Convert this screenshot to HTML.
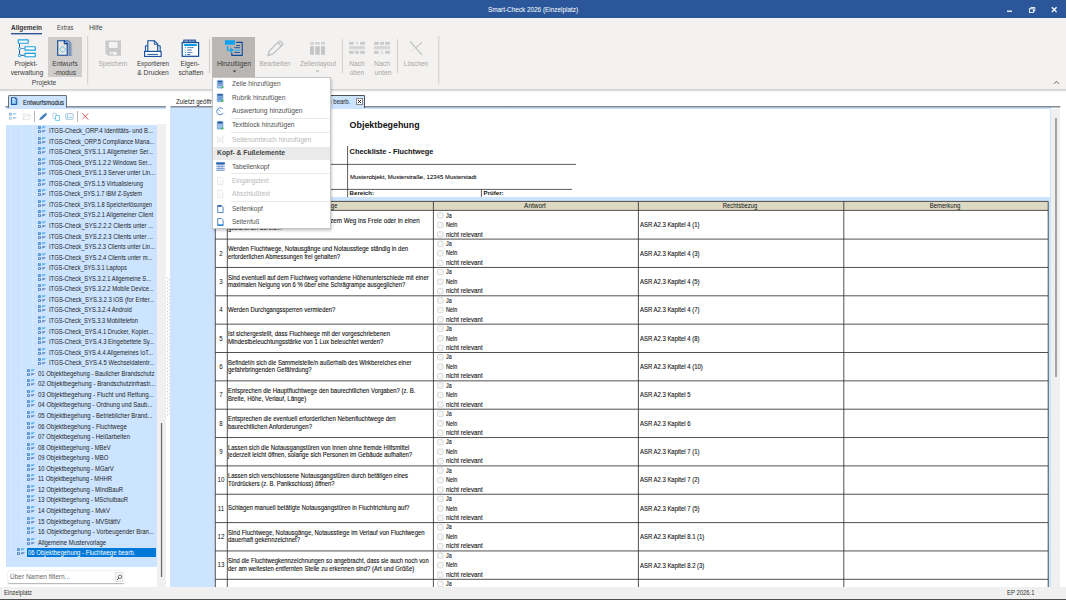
<!DOCTYPE html>
<html><head><meta charset="utf-8"><title>Smart-Check 2026 (Einzelplatz)</title>
<style>
*{box-sizing:border-box;margin:0;padding:0}
html,body{width:1066px;height:600px;overflow:hidden;background:#fff;font-family:"Liberation Sans",sans-serif;color:#222}
div,span,svg{position:absolute}
.t{white-space:nowrap;line-height:1}
.c{transform:translateX(-50%)}
#title{left:0;top:0;width:1066px;height:18px;background:#2b579a}
#ribbon{left:0;top:18px;width:1066px;height:71px;background:#f3f2f1}
#rshadow{left:0;top:89px;width:1066px;height:3px;background:linear-gradient(#cfcdcb,#e6e5e4 60%,#ffffff)}
.rl{font-size:6.67px;color:#3b3a39;text-align:center;white-space:nowrap;line-height:8.4px;transform:translateX(-50%)}
.rl.d{color:#a8a6a4}
.vsep{width:1px;background:#d2d0ce}
.tr{font-size:6px;color:#1e1e1e;white-space:nowrap;line-height:1;left:0}
.mi{font-size:6.67px;color:#444;white-space:nowrap;line-height:1;left:231.7px}
.mi.d{color:#b4b2b0}
.msep{left:230.6px;width:99.6px;height:1px;background:#eae9e8}
.q{font-size:6px;line-height:8px;color:#111;white-space:nowrap;left:228.3px}
.hl{background:#3a3a3a;height:1px}
.vl{background:#3a3a3a;width:1px}
.cb{width:5.9px;height:5.9px;border:0.8px solid #cfcfcf;border-radius:1.4px;background:#f7f7f7;left:437.4px}
.cl{font-size:6.15px;color:#111;left:445.6px;white-space:nowrap;line-height:1}
</style></head><body>
<div id="title"></div>
<div class="t c" style="left:533px;top:6.5px;font-size:6.4px;color:#fff">Smart-Check 2026 (Einzelplatz)</div>
<svg style="left:1000px;top:3px" width="66" height="14" viewBox="0 0 66 14"><g stroke="#fff" fill="none"><path d="M7 8.2h5" stroke-width="1.3"/><rect x="29.4" y="5.8" width="4" height="3.6" stroke-width="0.9"/><path d="M30.8 5.8v-1.3h4v3.6h-1.3" stroke-width="0.9"/><path d="M51.8 4.3l4.8 4.8M56.6 4.3l-4.8 4.8" stroke-width="1.3"/></g></svg>
<div id="ribbon"></div><div id="rshadow"></div>
<div class="t" style="left:11.00px;top:24.50px;font-size:6.9px;color:#333;font-weight:bold;transform:scaleX(0.9412);transform-origin:0 0;">Allgemein</div>
<svg style="left:0;top:30px" width="60" height="6" viewBox="0 30 60 6"><rect x="11" y="33" width="31" height="1.4" fill="#2b579a"/></svg>
<div class="t" style="left:56.90px;top:24.60px;font-size:6.9px;color:#444;transform:scaleX(0.8346);transform-origin:0 0;">Extras</div>
<div class="t" style="left:88.70px;top:24.60px;font-size:6.9px;color:#444;transform:scaleX(0.9785);transform-origin:0 0;">Hilfe</div>
<div style="left:48px;top:37px;width:34px;height:39.6px;background:#cfcdcb"></div>
<div style="left:212.3px;top:37px;width:42.6px;height:39.6px;background:#b9b6b3"></div>
<svg style="left:0;top:30px" width="460" height="60" viewBox="0 30 460 60"><path d="M87.7 36V84.5M209.5 39.2V73M342.4 39.2V73M397.5 39.2V73M438.8 36V84.5" stroke="#cfcdcb" stroke-width="1" fill="none"/></svg>
<div class="t" style="left:26.40px;top:61.20px;font-size:6.67px;color:#3b3a39;transform:translateX(-50%) scaleX(1.0027);">Projekt-</div>
<div class="t" style="left:26.80px;top:69.60px;font-size:6.67px;color:#3b3a39;transform:translateX(-50%) scaleX(1.0123);">verwaltung</div>
<div class="t" style="left:64.80px;top:61.20px;font-size:6.67px;color:#3b3a39;transform:translateX(-50%) scaleX(0.9805);">Entwurfs</div>
<div class="t" style="left:65.15px;top:69.60px;font-size:6.67px;color:#3b3a39;transform:translateX(-50%) scaleX(1.0134);">-modus</div>
<div class="t" style="left:113.25px;top:61.20px;font-size:6.67px;color:#a8a6a4;transform:translateX(-50%) scaleX(0.9638);">Speichern</div>
<div class="t" style="left:153.00px;top:61.20px;font-size:6.67px;color:#3b3a39;transform:translateX(-50%) scaleX(0.9458);">Exportieren</div>
<div class="t" style="left:153.05px;top:69.60px;font-size:6.67px;color:#3b3a39;transform:translateX(-50%) scaleX(1.0136);">&amp; Drucken</div>
<div class="t" style="left:190.40px;top:61.20px;font-size:6.67px;color:#3b3a39;transform:translateX(-50%) scaleX(0.987);">Eigen-</div>
<div class="t" style="left:190.70px;top:69.60px;font-size:6.67px;color:#3b3a39;transform:translateX(-50%) scaleX(0.9932);">schaften</div>
<div class="t" style="left:233.90px;top:61.20px;font-size:6.67px;color:#3b3a39;transform:translateX(-50%) scaleX(1.0152);">Hinzufügen</div>
<div class="t" style="left:275.45px;top:61.20px;font-size:6.67px;color:#a8a6a4;transform:translateX(-50%) scaleX(0.9657);">Bearbeiten</div>
<div class="t" style="left:317.90px;top:61.20px;font-size:6.67px;color:#a8a6a4;transform:translateX(-50%) scaleX(1.0082);">Zeilenlayout</div>
<div class="t" style="left:357.05px;top:61.20px;font-size:6.67px;color:#a8a6a4;transform:translateX(-50%) scaleX(1.0098);">Nach</div>
<div class="t" style="left:356.95px;top:69.60px;font-size:6.67px;color:#a8a6a4;transform:translateX(-50%) scaleX(0.9789);">oben</div>
<div class="t" style="left:381.95px;top:61.20px;font-size:6.67px;color:#a8a6a4;transform:translateX(-50%) scaleX(1.0227);">Nach</div>
<div class="t" style="left:382.55px;top:69.60px;font-size:6.67px;color:#a8a6a4;transform:translateX(-50%) scaleX(1.0257);">unten</div>
<div class="t" style="left:416.35px;top:61.20px;font-size:6.67px;color:#a8a6a4;transform:translateX(-50%) scaleX(0.9654);">Löschen</div>
<div class="t c" style="left:44px;top:80px;font-size:6.67px;color:#444">Projekte</div>
<svg style="left:231.5px;top:69.8px" width="5" height="3" viewBox="0 0 5 3"><path d="M0.6 0.4L2.5 2.4L4.4 0.4z" fill="#444"/></svg>
<svg style="left:315.3px;top:69.8px" width="5" height="3" viewBox="0 0 5 3"><path d="M0.6 0.4L2.5 2.4L4.4 0.4z" fill="#bbb"/></svg>
<svg style="left:1053px;top:80px" width="7" height="5" viewBox="0 0 7 5"><path d="M1 3.8L3.5 1.3L6 3.8" stroke="#555" stroke-width="0.9" fill="none"/></svg>
<div style="left:5.5px;top:107px;width:160.3px;height:2px;background:#cce4ff"></div>
<svg style="left:0;top:100px" width="1066" height="10" viewBox="0 100 1066 10"><defs><linearGradient id="tl" x1="0" x2="0" y1="0" y2="1"><stop offset="0" stop-color="#6a6e74"/><stop offset="1" stop-color="#a4afbf"/></linearGradient></defs><rect x="5.5" y="106.1" width="160.3" height="1.6" fill="url(#tl)"/></svg>
<div style="left:8px;top:95.3px;width:59px;height:12.7px;background:#cce4ff;border:1px solid #6a6f78;border-bottom:none;border-radius:1.5px 1.5px 0 0"></div>
<div class="t" style="left:22.60px;top:100.10px;font-size:6.3px;color:#1e1e1e;transform:scaleX(0.9469);transform-origin:0 0;-webkit-text-stroke:0.1px #1e1e1e;">Entwurfsmodus</div>
<svg style="left:0;top:36px" width="450" height="24" viewBox="0 36 450 24">
<!-- Projektverwaltung -->
<g fill="none">
<path d="M19.5 43.6V55.5" stroke="#123f8c" stroke-width="0.9"/>
<path d="M20.8 48.5H24.4" stroke="#5d82b8" stroke-width="0.9"/>
<path d="M20.8 55.3H24.4" stroke="#123f8c" stroke-width="0.9"/>
<rect x="18.3" y="39.9" width="9.9" height="3.3" rx="0.2" fill="#fff" stroke="#1ba1e2" stroke-width="1.15"/>
<rect x="24.9" y="46.7" width="10.4" height="3.4" rx="0.2" fill="#fff" stroke="#1ba1e2" stroke-width="1.15"/>
<rect x="24.9" y="53.4" width="10.4" height="3.3" rx="0.2" fill="#fff" stroke="#1ba1e2" stroke-width="1.15"/>
<circle cx="19.5" cy="48.6" r="1.1" fill="#fff" stroke="#1ba1e2" stroke-width="0.9"/>
<rect x="18.4" y="54.3" width="2.2" height="2.2" rx="0.4" fill="#fff" stroke="#1ba1e2" stroke-width="0.9"/>
</g>
<!-- Entwurfsmodus -->
<defs><linearGradient id="fd" x1="0" x2="1"><stop offset="0" stop-color="#6d8fbd"/><stop offset="1" stop-color="#6d8fbd" stop-opacity="0.15"/></linearGradient></defs>
<path d="M64 40.3h4.4l4.2 3.7v11.5h-5z" fill="url(#fd)" opacity="0.55"/>
<g fill="none" stroke="#2c5fa8"><path d="M66 40.6h2.2l1 0.9v14" stroke-width="0.9" opacity="0.75"/><path d="M68.6 41h0.9l1 1v13.5" stroke-width="0.8" opacity="0.5"/><path d="M70.4 42l1.2 1.2v12.3" stroke-width="0.8" opacity="0.3"/><path d="M67 55.5h5" stroke-width="0.8" opacity="0.45"/></g>
<path d="M57.7 40.7h7l2.5 2.5v12H57.7z" fill="#e9e6e2" stroke="#0d4a9a" stroke-width="1.1"/>
<path d="M64.2 40.3v3.6h3.5" fill="#0d4a9a" stroke="#0d4a9a" stroke-width="0.9"/>
<path d="M65.1 41.6v1.4h1.4z" fill="#fff"/>
<path d="M62.6 46.2l3.2 3.2-3.2 3.2-3.2-3.2z" fill="none" stroke="#55c1f0" stroke-width="0.9"/>
<!-- Speichern -->
<path d="M105.4 40.4h15.6v15.4h-12.8l-2.8-2.6z" fill="#c9c9c9"/>
<rect x="108.9" y="42" width="8.7" height="6" fill="#f3f2f1"/>
<rect x="109.9" y="51.9" width="6.9" height="3" fill="#f3f2f1"/>
<rect x="111.2" y="53" width="1.6" height="1.9" fill="#c2c2c2"/>
<!-- Exportieren & Drucken -->
<g fill="none" stroke="#0d4a9a">
<path d="M147.8 51V40.7h6.6l3.3 3.3V51" stroke-width="1.1"/>
<path d="M154.3 40.8v3.5h3.3" stroke-width="0.9"/>
<path d="M147.4 45.8h-2v5.2M158 45.8h2.2v5.2" stroke-width="1"/>
<rect x="144.6" y="51.4" width="16.5" height="5" fill="#fff" stroke-width="1.1"/>
<path d="M147.3 54.4h10.7" stroke-width="0.9"/>
</g>
<!-- Eigenschaften -->
<path d="M182.6 42.2l0.9-2.8h12.2l0.9 2.8z" fill="#3d66a3"/>
<path d="M184.5 40.7h3.3v1.1h-3.3zM189.2 40.7h2v1.1h-2zM192.6 40.7h1.8v1.1h-1.8z" fill="#a9bedb"/>
<rect x="182.2" y="42.6" width="16.4" height="13.7" fill="#fff" stroke="#0d4a9a" stroke-width="1.2"/>
<rect x="184" y="44" width="13" height="1.9" rx="0.4" fill="#0b9be3"/>
<g fill="#1ba1e2"><circle cx="185.5" cy="47.6" r="0.55"/><circle cx="185.5" cy="50" r="0.5" opacity="0.6"/><circle cx="185.5" cy="52.4" r="0.55"/><circle cx="185.5" cy="54.4" r="0.6"/></g>
<path d="M187.2 47.6h6.6" stroke="#3d66a3" stroke-width="0.8"/>
<path d="M187.2 50h4.6" stroke="#7f9cc5" stroke-width="1.4"/>
<path d="M187.2 52.4h5.4" stroke="#3d66a3" stroke-width="0.8"/>
<path d="M187.2 54.4h3.2" stroke="#0d3c8c" stroke-width="0.8"/>
<!-- Hinzufuegen -->
<rect x="224.9" y="40.2" width="10.1" height="4.6" rx="0.3" fill="#10a2ef"/>
<path d="M227.5 46v4.2h3.2" fill="none" stroke="#10a2ef" stroke-width="1.3"/>
<path d="M230.3 47.3l3.5 2.9-3.5 2.9z" fill="#10a2ef"/>
<g fill="none" stroke="#0d4a9a">
<path d="M236.2 42.4h6v13h-10.4v-2.6" stroke-width="1.1"/>
<path d="M236.2 45.5h3.8M234.2 47.7h5.8M234.2 52.4h5.8" stroke-width="0.9"/>
</g>
<path d="M234.8 50.1h5.6" stroke="#4db5ef" stroke-width="1.5"/>
<!-- Bearbeiten -->
<g fill="none" stroke="#c2c2c2" stroke-width="1.35" stroke-linejoin="round">
<path d="M267.9 55.5l1.3-4.6 9.7-9.3c0.6-0.6 1.3-0.6 1.9 0l1.6 1.6c0.6 0.6 0.6 1.3 0 1.9l-9.9 9.1z"/>
<path d="M278 42.6l3.4 3.4"/>
</g>
<path d="M267.9 55.5l0.8-2.8 1.9 2z" fill="#c6c6c6"/>
<!-- Zeilenlayout -->
<g fill="#d3d3d3"><rect x="310" y="42" width="4" height="2.7"/><rect x="315.2" y="42" width="4.6" height="2.7"/><rect x="321" y="42" width="4" height="2.7"/></g>
<g fill="#c6c6c6"><rect x="310" y="46.2" width="4" height="8.6"/><rect x="315.2" y="46.2" width="4.6" height="8.6"/><rect x="321" y="46.2" width="4" height="8.6"/></g>
<!-- Nach oben -->
<g fill="#c9c9c9"><rect x="349.1" y="41.9" width="4.6" height="2.8"/><rect x="360.2" y="41.9" width="4.7" height="2.8"/>
<rect x="349.1" y="51" width="4.6" height="2.8"/><rect x="355.1" y="51" width="3.8" height="2.8"/><rect x="360.2" y="51" width="4.7" height="2.8"/></g>
<rect x="349.1" y="46.1" width="15.8" height="2.8" fill="#d4d4d4"/><rect x="349.1" y="48.9" width="15.8" height="1.4" fill="#e6e6e5"/>
<path d="M357 41.2l1.7 1.7h-1v1.8h-1.4v-1.8h-1z" fill="#d6d6d6"/>
<!-- Nach unten -->
<g fill="#c9c9c9"><rect x="374.1" y="41.9" width="4.6" height="2.8"/><rect x="380.1" y="41.9" width="3.8" height="2.8"/><rect x="385.2" y="41.9" width="4.7" height="2.8"/>
<rect x="374.1" y="51" width="4.6" height="2.8"/><rect x="385.2" y="51" width="4.7" height="2.8"/></g>
<rect x="374.1" y="46.1" width="15.8" height="2.8" fill="#d4d4d4"/><rect x="374.1" y="48.9" width="15.8" height="1.4" fill="#e6e6e5"/>
<path d="M382 54.6l1.7-1.7h-1v-1.8h-1.4v1.8h-1z" fill="#d6d6d6"/>
<!-- Loeschen -->
<path d="M410.4 41.8l11.3 12.8" stroke="#c4c4c4" stroke-width="1.3" stroke-linecap="round"/>
<path d="M421.6 42.8l-5.4 4.6" stroke="#c4c4c4" stroke-width="1.2" stroke-linecap="round"/>
<path d="M416.2 47.4l-5 4.3" stroke="#d4d4d4" stroke-width="0.7" stroke-linecap="round"/>
</svg>
<svg style="left:0;top:94px" width="100" height="30" viewBox="0 94 100 30">
<!-- tab icon -->
<defs><linearGradient id="fd2" x1="0" x2="1"><stop offset="0" stop-color="#2d62a8"/><stop offset="1" stop-color="#2d62a8" stop-opacity="0.1"/></linearGradient></defs>
<path d="M15 97.3h1.5l1.8 1.6v5.9h-3.3z" fill="url(#fd2)"/>
<path d="M11.5 97.7h3.2l1.5 1.5v5.2h-4.7z" fill="#eaf3ff" stroke="#1a56a3" stroke-width="1.1"/>
<circle cx="13.7" cy="101.3" r="1.3" fill="none" stroke="#39aef0" stroke-width="0.7"/>
<path d="M12.4 103.4h2.6" stroke="#39aef0" stroke-width="0.6"/>
<!-- toolbar: checklist -->
<rect x="9.4" y="113.1" width="1.9" height="2.1" fill="#a8cdf0" stroke="#86a9d3" stroke-width="0.6"/>
<rect x="9.4" y="117.1" width="1.9" height="2.1" fill="#fff" stroke="#86a9d3" stroke-width="0.6"/>
<path d="M12.9 113.2h3.8l-0.9 1.4h-2.9z" fill="#7ccbf5"/>
<path d="M12.9 117.2h3.8l-0.9 1.4h-2.9z" fill="#9db4d2"/>
<!-- folder (disabled) -->
<path d="M23.2 119.4v-5.7h2.3l0.9 1h3.3v1.2" fill="none" stroke="#dcdcdc" stroke-width="0.7"/>
<path d="M23.2 119.4l1.3-3.5h6.1l-1.2 3.5z" fill="#fff" stroke="#dcdcdc" stroke-width="0.7"/>
<!-- pencil -->
<path d="M39.2 120.1l0.9-2.3 4.6-4.4 1.9 1.9-4.8 4.2z" fill="#3f7cbd"/>
<path d="M40.3 118l1.6 1.7M41.5 116.8l1.7 1.7M42.7 115.6l1.8 1.7" stroke="#6c9bd0" stroke-width="0.4"/>
<path d="M45 113.2l0.5-0.4c0.3-0.2 0.6-0.2 0.9 0.1l0.6 0.7c0.2 0.3 0.2 0.6 0 0.8l-0.5 0.5z" fill="#5b8fca"/>
<!-- copy -->
<rect x="52.9" y="113.3" width="3.6" height="5" rx="0.6" fill="#fff" stroke="#a3b7d2" stroke-width="0.7"/>
<rect x="55.6" y="115.6" width="3.8" height="4.9" fill="#fff" stroke="#5cc8f5" stroke-width="0.8"/>
<!-- layout -->
<rect x="65.6" y="113.6" width="7.6" height="5.8" rx="0.9" fill="#f4f8fd" stroke="#a3b9d6" stroke-width="0.8"/>
<path d="M67.5 114.6v4M68.6 117.4h3.4" stroke="#5cc8f5" stroke-width="0.7" fill="none"/>
<!-- red X -->
<path d="M82.6 113.5l5.4 5.8" stroke="#e05252" stroke-width="1" stroke-linecap="round"/>
<path d="M88 113.9l-5 4.6" stroke="#e46060" stroke-width="0.9" stroke-linecap="round"/>
</svg>

<div class="vsep" style="left:34px;top:111.3px;height:10.7px;background:#b5b5b5"></div>
<div class="vsep" style="left:77.2px;top:111.3px;height:10.7px;background:#b5b5b5"></div>
<div style="left:5.6px;top:124.5px;width:151px;height:442.2px;background:#cce4ff;overflow:hidden" id="tree">
<svg style="left:0;top:0" width="60" height="443" viewBox="0 0 60 443"><path d="M4.9 0V428.1M15.700000000000001 0V417.1M26.4 0V238.10000000000002M26.4 5.90h5.5M26.4 16.46h5.5M26.4 27.01h5.5M26.4 37.56h5.5M26.4 48.12h5.5M26.4 58.68h5.5M26.4 69.23h5.5M26.4 79.78h5.5M26.4 90.34h5.5M26.4 100.90h5.5M26.4 111.45h5.5M26.4 122.00h5.5M26.4 132.56h5.5M26.4 143.12h5.5M26.4 153.67h5.5M26.4 164.23h5.5M26.4 174.78h5.5M26.4 185.34h5.5M26.4 195.89h5.5M26.4 206.44h5.5M26.4 217.00h5.5M26.4 227.56h5.5M26.4 238.11h5.5M15.700000000000001 248.66h5.5M15.700000000000001 259.22h5.5M15.700000000000001 269.77h5.5M15.700000000000001 280.33h5.5M15.700000000000001 290.88h5.5M15.700000000000001 301.44h5.5M15.700000000000001 312.00h5.5M15.700000000000001 322.55h5.5M15.700000000000001 333.11h5.5M15.700000000000001 343.66h5.5M15.700000000000001 354.22h5.5M15.700000000000001 364.77h5.5M15.700000000000001 375.33h5.5M15.700000000000001 385.88h5.5M15.700000000000001 396.43h5.5M15.700000000000001 406.99h5.5M15.700000000000001 417.54h5.5M4.9 428.10h5.5" stroke="#ddeeff" stroke-width="0.7" fill="none"/></svg>
<svg style="left:32.4px;top:1.5px" width="8.4" height="7" viewBox="0 0 8.4 7"><rect x="0.1" y="0.3" width="2.7" height="2.5" fill="#3b79c0"/><rect x="0.8" y="0.9" width="1.5" height="1.1" fill="#7fb0e2"/><rect x="0.1" y="4.3" width="2.7" height="2.5" fill="#3570b8"/><rect x="0.9" y="5" width="1.1" height="1.1" fill="#cfe4fc"/><path d="M4.1 0.3h3.9l-1.6 1.6l-2.3 0.6z" fill="#5bb6f0"/><path d="M4.1 4.3h3.9l-1.6 1.5l-2.3 0.6z" fill="#6688bb"/></svg>
<div class="t" style="left:43.40px;top:3.50px;font-size:6.3px;color:#1e1e1e;transform:scaleX(0.9533);transform-origin:0 0;">ITGS-Check_ORP.4 Identitäts- und B...</div>
<svg style="left:32.4px;top:12.06px" width="8.4" height="7" viewBox="0 0 8.4 7"><rect x="0.1" y="0.3" width="2.7" height="2.5" fill="#3b79c0"/><rect x="0.8" y="0.9" width="1.5" height="1.1" fill="#7fb0e2"/><rect x="0.1" y="4.3" width="2.7" height="2.5" fill="#3570b8"/><rect x="0.9" y="5" width="1.1" height="1.1" fill="#cfe4fc"/><path d="M4.1 0.3h3.9l-1.6 1.6l-2.3 0.6z" fill="#5bb6f0"/><path d="M4.1 4.3h3.9l-1.6 1.5l-2.3 0.6z" fill="#6688bb"/></svg>
<div class="t" style="left:43.40px;top:14.06px;font-size:6.3px;color:#1e1e1e;transform:scaleX(0.9234);transform-origin:0 0;">ITGS-Check_ORP.5 Compliance Mana...</div>
<svg style="left:32.4px;top:22.61px" width="8.4" height="7" viewBox="0 0 8.4 7"><rect x="0.1" y="0.3" width="2.7" height="2.5" fill="#3b79c0"/><rect x="0.8" y="0.9" width="1.5" height="1.1" fill="#7fb0e2"/><rect x="0.1" y="4.3" width="2.7" height="2.5" fill="#3570b8"/><rect x="0.9" y="5" width="1.1" height="1.1" fill="#cfe4fc"/><path d="M4.1 0.3h3.9l-1.6 1.6l-2.3 0.6z" fill="#5bb6f0"/><path d="M4.1 4.3h3.9l-1.6 1.5l-2.3 0.6z" fill="#6688bb"/></svg>
<div class="t" style="left:43.40px;top:24.61px;font-size:6.3px;color:#1e1e1e;transform:scaleX(0.9256);transform-origin:0 0;">ITGS-Check_SYS.1.1 Allgemeiner Ser...</div>
<svg style="left:32.4px;top:33.16px" width="8.4" height="7" viewBox="0 0 8.4 7"><rect x="0.1" y="0.3" width="2.7" height="2.5" fill="#3b79c0"/><rect x="0.8" y="0.9" width="1.5" height="1.1" fill="#7fb0e2"/><rect x="0.1" y="4.3" width="2.7" height="2.5" fill="#3570b8"/><rect x="0.9" y="5" width="1.1" height="1.1" fill="#cfe4fc"/><path d="M4.1 0.3h3.9l-1.6 1.6l-2.3 0.6z" fill="#5bb6f0"/><path d="M4.1 4.3h3.9l-1.6 1.5l-2.3 0.6z" fill="#6688bb"/></svg>
<div class="t" style="left:43.40px;top:35.16px;font-size:6.3px;color:#1e1e1e;transform:scaleX(0.9342);transform-origin:0 0;">ITGS-Check_SYS.1.2.2 Windows Ser...</div>
<svg style="left:32.4px;top:43.72px" width="8.4" height="7" viewBox="0 0 8.4 7"><rect x="0.1" y="0.3" width="2.7" height="2.5" fill="#3b79c0"/><rect x="0.8" y="0.9" width="1.5" height="1.1" fill="#7fb0e2"/><rect x="0.1" y="4.3" width="2.7" height="2.5" fill="#3570b8"/><rect x="0.9" y="5" width="1.1" height="1.1" fill="#cfe4fc"/><path d="M4.1 0.3h3.9l-1.6 1.6l-2.3 0.6z" fill="#5bb6f0"/><path d="M4.1 4.3h3.9l-1.6 1.5l-2.3 0.6z" fill="#6688bb"/></svg>
<div class="t" style="left:43.40px;top:45.72px;font-size:6.3px;color:#1e1e1e;transform:scaleX(0.9377);transform-origin:0 0;">ITGS-Check_SYS.1.3 Server unter Lin...</div>
<svg style="left:32.4px;top:54.28px" width="8.4" height="7" viewBox="0 0 8.4 7"><rect x="0.1" y="0.3" width="2.7" height="2.5" fill="#3b79c0"/><rect x="0.8" y="0.9" width="1.5" height="1.1" fill="#7fb0e2"/><rect x="0.1" y="4.3" width="2.7" height="2.5" fill="#3570b8"/><rect x="0.9" y="5" width="1.1" height="1.1" fill="#cfe4fc"/><path d="M4.1 0.3h3.9l-1.6 1.6l-2.3 0.6z" fill="#5bb6f0"/><path d="M4.1 4.3h3.9l-1.6 1.5l-2.3 0.6z" fill="#6688bb"/></svg>
<div class="t" style="left:43.40px;top:56.28px;font-size:6.3px;color:#1e1e1e;transform:scaleX(0.9146);transform-origin:0 0;">ITGS-Check_SYS.1.5 Virtualisierung</div>
<svg style="left:32.4px;top:64.83px" width="8.4" height="7" viewBox="0 0 8.4 7"><rect x="0.1" y="0.3" width="2.7" height="2.5" fill="#3b79c0"/><rect x="0.8" y="0.9" width="1.5" height="1.1" fill="#7fb0e2"/><rect x="0.1" y="4.3" width="2.7" height="2.5" fill="#3570b8"/><rect x="0.9" y="5" width="1.1" height="1.1" fill="#cfe4fc"/><path d="M4.1 0.3h3.9l-1.6 1.6l-2.3 0.6z" fill="#5bb6f0"/><path d="M4.1 4.3h3.9l-1.6 1.5l-2.3 0.6z" fill="#6688bb"/></svg>
<div class="t" style="left:43.40px;top:66.83px;font-size:6.3px;color:#1e1e1e;transform:scaleX(0.904);transform-origin:0 0;">ITGS-Check_SYS.1.7 IBM Z-System</div>
<svg style="left:32.4px;top:75.38px" width="8.4" height="7" viewBox="0 0 8.4 7"><rect x="0.1" y="0.3" width="2.7" height="2.5" fill="#3b79c0"/><rect x="0.8" y="0.9" width="1.5" height="1.1" fill="#7fb0e2"/><rect x="0.1" y="4.3" width="2.7" height="2.5" fill="#3570b8"/><rect x="0.9" y="5" width="1.1" height="1.1" fill="#cfe4fc"/><path d="M4.1 0.3h3.9l-1.6 1.6l-2.3 0.6z" fill="#5bb6f0"/><path d="M4.1 4.3h3.9l-1.6 1.5l-2.3 0.6z" fill="#6688bb"/></svg>
<div class="t" style="left:43.40px;top:77.38px;font-size:6.3px;color:#1e1e1e;transform:scaleX(0.9082);transform-origin:0 0;">ITGS-Check_SYS.1.8 Speicherlösungen</div>
<svg style="left:32.4px;top:85.94px" width="8.4" height="7" viewBox="0 0 8.4 7"><rect x="0.1" y="0.3" width="2.7" height="2.5" fill="#3b79c0"/><rect x="0.8" y="0.9" width="1.5" height="1.1" fill="#7fb0e2"/><rect x="0.1" y="4.3" width="2.7" height="2.5" fill="#3570b8"/><rect x="0.9" y="5" width="1.1" height="1.1" fill="#cfe4fc"/><path d="M4.1 0.3h3.9l-1.6 1.6l-2.3 0.6z" fill="#5bb6f0"/><path d="M4.1 4.3h3.9l-1.6 1.5l-2.3 0.6z" fill="#6688bb"/></svg>
<div class="t" style="left:43.40px;top:87.94px;font-size:6.3px;color:#1e1e1e;transform:scaleX(0.9143);transform-origin:0 0;">ITGS-Check_SYS.2.1 Allgemeiner Client</div>
<svg style="left:32.4px;top:96.5px" width="8.4" height="7" viewBox="0 0 8.4 7"><rect x="0.1" y="0.3" width="2.7" height="2.5" fill="#3b79c0"/><rect x="0.8" y="0.9" width="1.5" height="1.1" fill="#7fb0e2"/><rect x="0.1" y="4.3" width="2.7" height="2.5" fill="#3570b8"/><rect x="0.9" y="5" width="1.1" height="1.1" fill="#cfe4fc"/><path d="M4.1 0.3h3.9l-1.6 1.6l-2.3 0.6z" fill="#5bb6f0"/><path d="M4.1 4.3h3.9l-1.6 1.5l-2.3 0.6z" fill="#6688bb"/></svg>
<div class="t" style="left:43.40px;top:98.50px;font-size:6.3px;color:#1e1e1e;transform:scaleX(0.9404);transform-origin:0 0;">ITGS-Check_SYS.2.2.2 Clients unter ...</div>
<svg style="left:32.4px;top:107.05px" width="8.4" height="7" viewBox="0 0 8.4 7"><rect x="0.1" y="0.3" width="2.7" height="2.5" fill="#3b79c0"/><rect x="0.8" y="0.9" width="1.5" height="1.1" fill="#7fb0e2"/><rect x="0.1" y="4.3" width="2.7" height="2.5" fill="#3570b8"/><rect x="0.9" y="5" width="1.1" height="1.1" fill="#cfe4fc"/><path d="M4.1 0.3h3.9l-1.6 1.6l-2.3 0.6z" fill="#5bb6f0"/><path d="M4.1 4.3h3.9l-1.6 1.5l-2.3 0.6z" fill="#6688bb"/></svg>
<div class="t" style="left:43.40px;top:109.05px;font-size:6.3px;color:#1e1e1e;transform:scaleX(0.9404);transform-origin:0 0;">ITGS-Check_SYS.2.2.3 Clients unter ...</div>
<svg style="left:32.4px;top:117.6px" width="8.4" height="7" viewBox="0 0 8.4 7"><rect x="0.1" y="0.3" width="2.7" height="2.5" fill="#3b79c0"/><rect x="0.8" y="0.9" width="1.5" height="1.1" fill="#7fb0e2"/><rect x="0.1" y="4.3" width="2.7" height="2.5" fill="#3570b8"/><rect x="0.9" y="5" width="1.1" height="1.1" fill="#cfe4fc"/><path d="M4.1 0.3h3.9l-1.6 1.6l-2.3 0.6z" fill="#5bb6f0"/><path d="M4.1 4.3h3.9l-1.6 1.5l-2.3 0.6z" fill="#6688bb"/></svg>
<div class="t" style="left:43.40px;top:119.60px;font-size:6.3px;color:#1e1e1e;transform:scaleX(0.9319);transform-origin:0 0;">ITGS-Check_SYS.2.3 Clients unter Lin...</div>
<svg style="left:32.4px;top:128.16px" width="8.4" height="7" viewBox="0 0 8.4 7"><rect x="0.1" y="0.3" width="2.7" height="2.5" fill="#3b79c0"/><rect x="0.8" y="0.9" width="1.5" height="1.1" fill="#7fb0e2"/><rect x="0.1" y="4.3" width="2.7" height="2.5" fill="#3570b8"/><rect x="0.9" y="5" width="1.1" height="1.1" fill="#cfe4fc"/><path d="M4.1 0.3h3.9l-1.6 1.6l-2.3 0.6z" fill="#5bb6f0"/><path d="M4.1 4.3h3.9l-1.6 1.5l-2.3 0.6z" fill="#6688bb"/></svg>
<div class="t" style="left:43.40px;top:130.16px;font-size:6.3px;color:#1e1e1e;transform:scaleX(0.9359);transform-origin:0 0;">ITGS-Check_SYS.2.4 Clients unter m...</div>
<svg style="left:32.4px;top:138.72px" width="8.4" height="7" viewBox="0 0 8.4 7"><rect x="0.1" y="0.3" width="2.7" height="2.5" fill="#3b79c0"/><rect x="0.8" y="0.9" width="1.5" height="1.1" fill="#7fb0e2"/><rect x="0.1" y="4.3" width="2.7" height="2.5" fill="#3570b8"/><rect x="0.9" y="5" width="1.1" height="1.1" fill="#cfe4fc"/><path d="M4.1 0.3h3.9l-1.6 1.6l-2.3 0.6z" fill="#5bb6f0"/><path d="M4.1 4.3h3.9l-1.6 1.5l-2.3 0.6z" fill="#6688bb"/></svg>
<div class="t" style="left:43.40px;top:140.72px;font-size:6.3px;color:#1e1e1e;transform:scaleX(0.9104);transform-origin:0 0;">ITGS-Check_SYS.3.1 Laptops</div>
<svg style="left:32.4px;top:149.27px" width="8.4" height="7" viewBox="0 0 8.4 7"><rect x="0.1" y="0.3" width="2.7" height="2.5" fill="#3b79c0"/><rect x="0.8" y="0.9" width="1.5" height="1.1" fill="#7fb0e2"/><rect x="0.1" y="4.3" width="2.7" height="2.5" fill="#3570b8"/><rect x="0.9" y="5" width="1.1" height="1.1" fill="#cfe4fc"/><path d="M4.1 0.3h3.9l-1.6 1.6l-2.3 0.6z" fill="#5bb6f0"/><path d="M4.1 4.3h3.9l-1.6 1.5l-2.3 0.6z" fill="#6688bb"/></svg>
<div class="t" style="left:43.40px;top:151.27px;font-size:6.3px;color:#1e1e1e;transform:scaleX(0.9252);transform-origin:0 0;">ITGS-Check_SYS.3.2.1 Allgemeine S...</div>
<svg style="left:32.4px;top:159.82px" width="8.4" height="7" viewBox="0 0 8.4 7"><rect x="0.1" y="0.3" width="2.7" height="2.5" fill="#3b79c0"/><rect x="0.8" y="0.9" width="1.5" height="1.1" fill="#7fb0e2"/><rect x="0.1" y="4.3" width="2.7" height="2.5" fill="#3570b8"/><rect x="0.9" y="5" width="1.1" height="1.1" fill="#cfe4fc"/><path d="M4.1 0.3h3.9l-1.6 1.6l-2.3 0.6z" fill="#5bb6f0"/><path d="M4.1 4.3h3.9l-1.6 1.5l-2.3 0.6z" fill="#6688bb"/></svg>
<div class="t" style="left:43.40px;top:161.82px;font-size:6.3px;color:#1e1e1e;transform:scaleX(0.9266);transform-origin:0 0;">ITGS-Check_SYS.3.2.2 Mobile Device...</div>
<svg style="left:32.4px;top:170.38px" width="8.4" height="7" viewBox="0 0 8.4 7"><rect x="0.1" y="0.3" width="2.7" height="2.5" fill="#3b79c0"/><rect x="0.8" y="0.9" width="1.5" height="1.1" fill="#7fb0e2"/><rect x="0.1" y="4.3" width="2.7" height="2.5" fill="#3570b8"/><rect x="0.9" y="5" width="1.1" height="1.1" fill="#cfe4fc"/><path d="M4.1 0.3h3.9l-1.6 1.6l-2.3 0.6z" fill="#5bb6f0"/><path d="M4.1 4.3h3.9l-1.6 1.5l-2.3 0.6z" fill="#6688bb"/></svg>
<div class="t" style="left:43.40px;top:172.38px;font-size:6.3px;color:#1e1e1e;transform:scaleX(0.9428);transform-origin:0 0;">ITGS-Check_SYS.3.2.3 iOS (for Enter...</div>
<svg style="left:32.4px;top:180.94px" width="8.4" height="7" viewBox="0 0 8.4 7"><rect x="0.1" y="0.3" width="2.7" height="2.5" fill="#3b79c0"/><rect x="0.8" y="0.9" width="1.5" height="1.1" fill="#7fb0e2"/><rect x="0.1" y="4.3" width="2.7" height="2.5" fill="#3570b8"/><rect x="0.9" y="5" width="1.1" height="1.1" fill="#cfe4fc"/><path d="M4.1 0.3h3.9l-1.6 1.6l-2.3 0.6z" fill="#5bb6f0"/><path d="M4.1 4.3h3.9l-1.6 1.5l-2.3 0.6z" fill="#6688bb"/></svg>
<div class="t" style="left:43.40px;top:182.94px;font-size:6.3px;color:#1e1e1e;transform:scaleX(0.9235);transform-origin:0 0;">ITGS-Check_SYS.3.2.4 Android</div>
<svg style="left:32.4px;top:191.49px" width="8.4" height="7" viewBox="0 0 8.4 7"><rect x="0.1" y="0.3" width="2.7" height="2.5" fill="#3b79c0"/><rect x="0.8" y="0.9" width="1.5" height="1.1" fill="#7fb0e2"/><rect x="0.1" y="4.3" width="2.7" height="2.5" fill="#3570b8"/><rect x="0.9" y="5" width="1.1" height="1.1" fill="#cfe4fc"/><path d="M4.1 0.3h3.9l-1.6 1.6l-2.3 0.6z" fill="#5bb6f0"/><path d="M4.1 4.3h3.9l-1.6 1.5l-2.3 0.6z" fill="#6688bb"/></svg>
<div class="t" style="left:43.40px;top:193.49px;font-size:6.3px;color:#1e1e1e;transform:scaleX(0.918);transform-origin:0 0;">ITGS-Check_SYS.3.3 Mobiltelefon</div>
<svg style="left:32.4px;top:202.04px" width="8.4" height="7" viewBox="0 0 8.4 7"><rect x="0.1" y="0.3" width="2.7" height="2.5" fill="#3b79c0"/><rect x="0.8" y="0.9" width="1.5" height="1.1" fill="#7fb0e2"/><rect x="0.1" y="4.3" width="2.7" height="2.5" fill="#3570b8"/><rect x="0.9" y="5" width="1.1" height="1.1" fill="#cfe4fc"/><path d="M4.1 0.3h3.9l-1.6 1.6l-2.3 0.6z" fill="#5bb6f0"/><path d="M4.1 4.3h3.9l-1.6 1.5l-2.3 0.6z" fill="#6688bb"/></svg>
<div class="t" style="left:43.40px;top:204.04px;font-size:6.3px;color:#1e1e1e;transform:scaleX(0.9344);transform-origin:0 0;">ITGS-Check_SYS.4.1 Drucker, Kopier...</div>
<svg style="left:32.4px;top:212.6px" width="8.4" height="7" viewBox="0 0 8.4 7"><rect x="0.1" y="0.3" width="2.7" height="2.5" fill="#3b79c0"/><rect x="0.8" y="0.9" width="1.5" height="1.1" fill="#7fb0e2"/><rect x="0.1" y="4.3" width="2.7" height="2.5" fill="#3570b8"/><rect x="0.9" y="5" width="1.1" height="1.1" fill="#cfe4fc"/><path d="M4.1 0.3h3.9l-1.6 1.6l-2.3 0.6z" fill="#5bb6f0"/><path d="M4.1 4.3h3.9l-1.6 1.5l-2.3 0.6z" fill="#6688bb"/></svg>
<div class="t" style="left:43.40px;top:214.60px;font-size:6.3px;color:#1e1e1e;transform:scaleX(0.9378);transform-origin:0 0;">ITGS-Check_SYS.4.3 Eingebettete Sy...</div>
<svg style="left:32.4px;top:223.15px" width="8.4" height="7" viewBox="0 0 8.4 7"><rect x="0.1" y="0.3" width="2.7" height="2.5" fill="#3b79c0"/><rect x="0.8" y="0.9" width="1.5" height="1.1" fill="#7fb0e2"/><rect x="0.1" y="4.3" width="2.7" height="2.5" fill="#3570b8"/><rect x="0.9" y="5" width="1.1" height="1.1" fill="#cfe4fc"/><path d="M4.1 0.3h3.9l-1.6 1.6l-2.3 0.6z" fill="#5bb6f0"/><path d="M4.1 4.3h3.9l-1.6 1.5l-2.3 0.6z" fill="#6688bb"/></svg>
<div class="t" style="left:43.40px;top:225.15px;font-size:6.3px;color:#1e1e1e;transform:scaleX(0.9256);transform-origin:0 0;">ITGS-Check_SYS.4.4 Allgemeines IoT...</div>
<svg style="left:32.4px;top:233.71px" width="8.4" height="7" viewBox="0 0 8.4 7"><rect x="0.1" y="0.3" width="2.7" height="2.5" fill="#3b79c0"/><rect x="0.8" y="0.9" width="1.5" height="1.1" fill="#7fb0e2"/><rect x="0.1" y="4.3" width="2.7" height="2.5" fill="#3570b8"/><rect x="0.9" y="5" width="1.1" height="1.1" fill="#cfe4fc"/><path d="M4.1 0.3h3.9l-1.6 1.6l-2.3 0.6z" fill="#5bb6f0"/><path d="M4.1 4.3h3.9l-1.6 1.5l-2.3 0.6z" fill="#6688bb"/></svg>
<div class="t" style="left:43.40px;top:235.71px;font-size:6.3px;color:#1e1e1e;transform:scaleX(0.9437);transform-origin:0 0;">ITGS-Check_SYS.4.5 Wechseldatentr...</div>
<svg style="left:21.7px;top:244.26px" width="8.4" height="7" viewBox="0 0 8.4 7"><rect x="0.1" y="0.3" width="2.7" height="2.5" fill="#3b79c0"/><rect x="0.8" y="0.9" width="1.5" height="1.1" fill="#7fb0e2"/><rect x="0.1" y="4.3" width="2.7" height="2.5" fill="#3570b8"/><rect x="0.9" y="5" width="1.1" height="1.1" fill="#cfe4fc"/><path d="M4.1 0.3h3.9l-1.6 1.6l-2.3 0.6z" fill="#5bb6f0"/><path d="M4.1 4.3h3.9l-1.6 1.5l-2.3 0.6z" fill="#6688bb"/></svg>
<div class="t" style="left:32.40px;top:246.26px;font-size:6.3px;color:#1e1e1e;transform:scaleX(0.9427);transform-origin:0 0;">01 Objektbegehung - Baulicher Brandschutz</div>
<svg style="left:21.7px;top:254.82px" width="8.4" height="7" viewBox="0 0 8.4 7"><rect x="0.1" y="0.3" width="2.7" height="2.5" fill="#3b79c0"/><rect x="0.8" y="0.9" width="1.5" height="1.1" fill="#7fb0e2"/><rect x="0.1" y="4.3" width="2.7" height="2.5" fill="#3570b8"/><rect x="0.9" y="5" width="1.1" height="1.1" fill="#cfe4fc"/><path d="M4.1 0.3h3.9l-1.6 1.6l-2.3 0.6z" fill="#5bb6f0"/><path d="M4.1 4.3h3.9l-1.6 1.5l-2.3 0.6z" fill="#6688bb"/></svg>
<div class="t" style="left:32.40px;top:256.82px;font-size:6.3px;color:#1e1e1e;transform:scaleX(0.9773);transform-origin:0 0;">02 Objektbegehung - Brandschutzinfrastr...</div>
<svg style="left:21.7px;top:265.38px" width="8.4" height="7" viewBox="0 0 8.4 7"><rect x="0.1" y="0.3" width="2.7" height="2.5" fill="#3b79c0"/><rect x="0.8" y="0.9" width="1.5" height="1.1" fill="#7fb0e2"/><rect x="0.1" y="4.3" width="2.7" height="2.5" fill="#3570b8"/><rect x="0.9" y="5" width="1.1" height="1.1" fill="#cfe4fc"/><path d="M4.1 0.3h3.9l-1.6 1.6l-2.3 0.6z" fill="#5bb6f0"/><path d="M4.1 4.3h3.9l-1.6 1.5l-2.3 0.6z" fill="#6688bb"/></svg>
<div class="t" style="left:32.40px;top:267.38px;font-size:6.3px;color:#1e1e1e;transform:scaleX(0.9724);transform-origin:0 0;">03 Objektbegehung - Flucht und Rettung...</div>
<svg style="left:21.7px;top:275.93px" width="8.4" height="7" viewBox="0 0 8.4 7"><rect x="0.1" y="0.3" width="2.7" height="2.5" fill="#3b79c0"/><rect x="0.8" y="0.9" width="1.5" height="1.1" fill="#7fb0e2"/><rect x="0.1" y="4.3" width="2.7" height="2.5" fill="#3570b8"/><rect x="0.9" y="5" width="1.1" height="1.1" fill="#cfe4fc"/><path d="M4.1 0.3h3.9l-1.6 1.6l-2.3 0.6z" fill="#5bb6f0"/><path d="M4.1 4.3h3.9l-1.6 1.5l-2.3 0.6z" fill="#6688bb"/></svg>
<div class="t" style="left:32.40px;top:277.93px;font-size:6.3px;color:#1e1e1e;transform:scaleX(0.9619);transform-origin:0 0;">04 Objektbegehung - Ordnung und Saub...</div>
<svg style="left:21.7px;top:286.49px" width="8.4" height="7" viewBox="0 0 8.4 7"><rect x="0.1" y="0.3" width="2.7" height="2.5" fill="#3b79c0"/><rect x="0.8" y="0.9" width="1.5" height="1.1" fill="#7fb0e2"/><rect x="0.1" y="4.3" width="2.7" height="2.5" fill="#3570b8"/><rect x="0.9" y="5" width="1.1" height="1.1" fill="#cfe4fc"/><path d="M4.1 0.3h3.9l-1.6 1.6l-2.3 0.6z" fill="#5bb6f0"/><path d="M4.1 4.3h3.9l-1.6 1.5l-2.3 0.6z" fill="#6688bb"/></svg>
<div class="t" style="left:32.40px;top:288.49px;font-size:6.3px;color:#1e1e1e;transform:scaleX(0.9592);transform-origin:0 0;">05 Objektbegehung - Betrieblicher Brand...</div>
<svg style="left:21.7px;top:297.04px" width="8.4" height="7" viewBox="0 0 8.4 7"><rect x="0.1" y="0.3" width="2.7" height="2.5" fill="#3b79c0"/><rect x="0.8" y="0.9" width="1.5" height="1.1" fill="#7fb0e2"/><rect x="0.1" y="4.3" width="2.7" height="2.5" fill="#3570b8"/><rect x="0.9" y="5" width="1.1" height="1.1" fill="#cfe4fc"/><path d="M4.1 0.3h3.9l-1.6 1.6l-2.3 0.6z" fill="#5bb6f0"/><path d="M4.1 4.3h3.9l-1.6 1.5l-2.3 0.6z" fill="#6688bb"/></svg>
<div class="t" style="left:32.40px;top:299.04px;font-size:6.3px;color:#1e1e1e;transform:scaleX(0.9567);transform-origin:0 0;">06 Objektbegehung - Fluchtwege</div>
<svg style="left:21.7px;top:307.59px" width="8.4" height="7" viewBox="0 0 8.4 7"><rect x="0.1" y="0.3" width="2.7" height="2.5" fill="#3b79c0"/><rect x="0.8" y="0.9" width="1.5" height="1.1" fill="#7fb0e2"/><rect x="0.1" y="4.3" width="2.7" height="2.5" fill="#3570b8"/><rect x="0.9" y="5" width="1.1" height="1.1" fill="#cfe4fc"/><path d="M4.1 0.3h3.9l-1.6 1.6l-2.3 0.6z" fill="#5bb6f0"/><path d="M4.1 4.3h3.9l-1.6 1.5l-2.3 0.6z" fill="#6688bb"/></svg>
<div class="t" style="left:32.40px;top:309.59px;font-size:6.3px;color:#1e1e1e;transform:scaleX(0.9521);transform-origin:0 0;">07 Objektbegehung - Heißarbeiten</div>
<svg style="left:21.7px;top:318.15px" width="8.4" height="7" viewBox="0 0 8.4 7"><rect x="0.1" y="0.3" width="2.7" height="2.5" fill="#3b79c0"/><rect x="0.8" y="0.9" width="1.5" height="1.1" fill="#7fb0e2"/><rect x="0.1" y="4.3" width="2.7" height="2.5" fill="#3570b8"/><rect x="0.9" y="5" width="1.1" height="1.1" fill="#cfe4fc"/><path d="M4.1 0.3h3.9l-1.6 1.6l-2.3 0.6z" fill="#5bb6f0"/><path d="M4.1 4.3h3.9l-1.6 1.5l-2.3 0.6z" fill="#6688bb"/></svg>
<div class="t" style="left:32.40px;top:320.15px;font-size:6.3px;color:#1e1e1e;transform:scaleX(0.9361);transform-origin:0 0;">08 Objektbegehung - MBeV</div>
<svg style="left:21.7px;top:328.7px" width="8.4" height="7" viewBox="0 0 8.4 7"><rect x="0.1" y="0.3" width="2.7" height="2.5" fill="#3b79c0"/><rect x="0.8" y="0.9" width="1.5" height="1.1" fill="#7fb0e2"/><rect x="0.1" y="4.3" width="2.7" height="2.5" fill="#3570b8"/><rect x="0.9" y="5" width="1.1" height="1.1" fill="#cfe4fc"/><path d="M4.1 0.3h3.9l-1.6 1.6l-2.3 0.6z" fill="#5bb6f0"/><path d="M4.1 4.3h3.9l-1.6 1.5l-2.3 0.6z" fill="#6688bb"/></svg>
<div class="t" style="left:32.40px;top:330.70px;font-size:6.3px;color:#1e1e1e;transform:scaleX(0.9376);transform-origin:0 0;">09 Objektbegehung - MBO</div>
<svg style="left:21.7px;top:339.26px" width="8.4" height="7" viewBox="0 0 8.4 7"><rect x="0.1" y="0.3" width="2.7" height="2.5" fill="#3b79c0"/><rect x="0.8" y="0.9" width="1.5" height="1.1" fill="#7fb0e2"/><rect x="0.1" y="4.3" width="2.7" height="2.5" fill="#3570b8"/><rect x="0.9" y="5" width="1.1" height="1.1" fill="#cfe4fc"/><path d="M4.1 0.3h3.9l-1.6 1.6l-2.3 0.6z" fill="#5bb6f0"/><path d="M4.1 4.3h3.9l-1.6 1.5l-2.3 0.6z" fill="#6688bb"/></svg>
<div class="t" style="left:32.40px;top:341.26px;font-size:6.3px;color:#1e1e1e;transform:scaleX(0.9408);transform-origin:0 0;">10 Objektbegehung - MGarV</div>
<svg style="left:21.7px;top:349.81px" width="8.4" height="7" viewBox="0 0 8.4 7"><rect x="0.1" y="0.3" width="2.7" height="2.5" fill="#3b79c0"/><rect x="0.8" y="0.9" width="1.5" height="1.1" fill="#7fb0e2"/><rect x="0.1" y="4.3" width="2.7" height="2.5" fill="#3570b8"/><rect x="0.9" y="5" width="1.1" height="1.1" fill="#cfe4fc"/><path d="M4.1 0.3h3.9l-1.6 1.6l-2.3 0.6z" fill="#5bb6f0"/><path d="M4.1 4.3h3.9l-1.6 1.5l-2.3 0.6z" fill="#6688bb"/></svg>
<div class="t" style="left:32.40px;top:351.81px;font-size:6.3px;color:#1e1e1e;transform:scaleX(0.9367);transform-origin:0 0;">11 Objektbegehung - MHHR</div>
<svg style="left:21.7px;top:360.37px" width="8.4" height="7" viewBox="0 0 8.4 7"><rect x="0.1" y="0.3" width="2.7" height="2.5" fill="#3b79c0"/><rect x="0.8" y="0.9" width="1.5" height="1.1" fill="#7fb0e2"/><rect x="0.1" y="4.3" width="2.7" height="2.5" fill="#3570b8"/><rect x="0.9" y="5" width="1.1" height="1.1" fill="#cfe4fc"/><path d="M4.1 0.3h3.9l-1.6 1.6l-2.3 0.6z" fill="#5bb6f0"/><path d="M4.1 4.3h3.9l-1.6 1.5l-2.3 0.6z" fill="#6688bb"/></svg>
<div class="t" style="left:32.40px;top:362.37px;font-size:6.3px;color:#1e1e1e;transform:scaleX(0.9421);transform-origin:0 0;">12 Objektbegehung - MIndBauR</div>
<svg style="left:21.7px;top:370.93px" width="8.4" height="7" viewBox="0 0 8.4 7"><rect x="0.1" y="0.3" width="2.7" height="2.5" fill="#3b79c0"/><rect x="0.8" y="0.9" width="1.5" height="1.1" fill="#7fb0e2"/><rect x="0.1" y="4.3" width="2.7" height="2.5" fill="#3570b8"/><rect x="0.9" y="5" width="1.1" height="1.1" fill="#cfe4fc"/><path d="M4.1 0.3h3.9l-1.6 1.6l-2.3 0.6z" fill="#5bb6f0"/><path d="M4.1 4.3h3.9l-1.6 1.5l-2.3 0.6z" fill="#6688bb"/></svg>
<div class="t" style="left:32.40px;top:372.93px;font-size:6.3px;color:#1e1e1e;transform:scaleX(0.9325);transform-origin:0 0;">13 Objektbegehung - MSchulbauR</div>
<svg style="left:21.7px;top:381.48px" width="8.4" height="7" viewBox="0 0 8.4 7"><rect x="0.1" y="0.3" width="2.7" height="2.5" fill="#3b79c0"/><rect x="0.8" y="0.9" width="1.5" height="1.1" fill="#7fb0e2"/><rect x="0.1" y="4.3" width="2.7" height="2.5" fill="#3570b8"/><rect x="0.9" y="5" width="1.1" height="1.1" fill="#cfe4fc"/><path d="M4.1 0.3h3.9l-1.6 1.6l-2.3 0.6z" fill="#5bb6f0"/><path d="M4.1 4.3h3.9l-1.6 1.5l-2.3 0.6z" fill="#6688bb"/></svg>
<div class="t" style="left:32.40px;top:383.48px;font-size:6.3px;color:#1e1e1e;transform:scaleX(0.9435);transform-origin:0 0;">14 Objektbegehung - MvkV</div>
<svg style="left:21.7px;top:392.03px" width="8.4" height="7" viewBox="0 0 8.4 7"><rect x="0.1" y="0.3" width="2.7" height="2.5" fill="#3b79c0"/><rect x="0.8" y="0.9" width="1.5" height="1.1" fill="#7fb0e2"/><rect x="0.1" y="4.3" width="2.7" height="2.5" fill="#3570b8"/><rect x="0.9" y="5" width="1.1" height="1.1" fill="#cfe4fc"/><path d="M4.1 0.3h3.9l-1.6 1.6l-2.3 0.6z" fill="#5bb6f0"/><path d="M4.1 4.3h3.9l-1.6 1.5l-2.3 0.6z" fill="#6688bb"/></svg>
<div class="t" style="left:32.40px;top:394.03px;font-size:6.3px;color:#1e1e1e;transform:scaleX(0.9476);transform-origin:0 0;">15 Objektbegehung - MVStättV</div>
<svg style="left:21.7px;top:402.59px" width="8.4" height="7" viewBox="0 0 8.4 7"><rect x="0.1" y="0.3" width="2.7" height="2.5" fill="#3b79c0"/><rect x="0.8" y="0.9" width="1.5" height="1.1" fill="#7fb0e2"/><rect x="0.1" y="4.3" width="2.7" height="2.5" fill="#3570b8"/><rect x="0.9" y="5" width="1.1" height="1.1" fill="#cfe4fc"/><path d="M4.1 0.3h3.9l-1.6 1.6l-2.3 0.6z" fill="#5bb6f0"/><path d="M4.1 4.3h3.9l-1.6 1.5l-2.3 0.6z" fill="#6688bb"/></svg>
<div class="t" style="left:32.40px;top:404.59px;font-size:6.3px;color:#1e1e1e;transform:scaleX(0.9632);transform-origin:0 0;">16 Objektbegehung - Vorbeugender Bran...</div>
<svg style="left:21.7px;top:413.14px" width="8.4" height="7" viewBox="0 0 8.4 7"><rect x="0.1" y="0.3" width="2.7" height="2.5" fill="#3b79c0"/><rect x="0.8" y="0.9" width="1.5" height="1.1" fill="#7fb0e2"/><rect x="0.1" y="4.3" width="2.7" height="2.5" fill="#3570b8"/><rect x="0.9" y="5" width="1.1" height="1.1" fill="#cfe4fc"/><path d="M4.1 0.3h3.9l-1.6 1.6l-2.3 0.6z" fill="#5bb6f0"/><path d="M4.1 4.3h3.9l-1.6 1.5l-2.3 0.6z" fill="#6688bb"/></svg>
<div class="t" style="left:32.40px;top:415.14px;font-size:6.3px;color:#1e1e1e;transform:scaleX(0.9339);transform-origin:0 0;">Allgemeine Mustervorlage</div>
<div style="left:21.299999999999997px;top:423.10px;width:129.4px;height:9.8px;background:#0078d7"></div>
<svg style="left:11.3px;top:423.7px" width="8.4" height="7" viewBox="0 0 8.4 7"><rect x="0.1" y="0.3" width="2.7" height="2.5" fill="#3b79c0"/><rect x="0.8" y="0.9" width="1.5" height="1.1" fill="#7fb0e2"/><rect x="0.1" y="4.3" width="2.7" height="2.5" fill="#3570b8"/><rect x="0.9" y="5" width="1.1" height="1.1" fill="#cfe4fc"/><path d="M4.1 0.3h3.9l-1.6 1.6l-2.3 0.6z" fill="#5bb6f0"/><path d="M4.1 4.3h3.9l-1.6 1.5l-2.3 0.6z" fill="#6688bb"/></svg>
<div class="t" style="left:22.20px;top:425.70px;font-size:6.3px;color:#fff;transform:scaleX(0.9539);transform-origin:0 0;">06 Objektbegehung - Fluchtwege bearb.</div>
</div>
<div style="left:157px;top:124px;width:8.6px;height:463px;background:#f0f0f0"></div>
<svg style="left:155px;top:420px" width="12" height="160" viewBox="155 420 12 160"><rect x="160.9" y="423" width="1.25" height="154" fill="#6a6a6a"/></svg>
<svg style="left:0;top:270px" width="180" height="150" viewBox="0 270 180 150"><g fill="#b9b9b9"><rect x="167.1" y="277.60" width="0.9" height="0.9"/><rect x="168.8" y="279.27" width="0.9" height="0.9"/><rect x="167.1" y="280.94" width="0.9" height="0.9"/><rect x="168.8" y="282.61" width="0.9" height="0.9"/><rect x="167.1" y="284.28" width="0.9" height="0.9"/><rect x="168.8" y="285.95" width="0.9" height="0.9"/><rect x="167.1" y="287.62" width="0.9" height="0.9"/><rect x="168.8" y="289.29" width="0.9" height="0.9"/><rect x="167.1" y="290.96" width="0.9" height="0.9"/><rect x="168.8" y="292.63" width="0.9" height="0.9"/><rect x="167.1" y="294.30" width="0.9" height="0.9"/><rect x="168.8" y="295.97" width="0.9" height="0.9"/><rect x="167.1" y="297.64" width="0.9" height="0.9"/><rect x="168.8" y="299.31" width="0.9" height="0.9"/><rect x="167.1" y="300.98" width="0.9" height="0.9"/><rect x="168.8" y="302.65" width="0.9" height="0.9"/><rect x="167.1" y="304.32" width="0.9" height="0.9"/><rect x="168.8" y="305.99" width="0.9" height="0.9"/><rect x="167.1" y="307.66" width="0.9" height="0.9"/><rect x="168.8" y="309.33" width="0.9" height="0.9"/><rect x="167.1" y="311.00" width="0.9" height="0.9"/><rect x="168.8" y="312.67" width="0.9" height="0.9"/><rect x="167.1" y="314.34" width="0.9" height="0.9"/><rect x="168.8" y="316.01" width="0.9" height="0.9"/><rect x="167.1" y="317.68" width="0.9" height="0.9"/><rect x="168.8" y="319.35" width="0.9" height="0.9"/><rect x="167.1" y="321.02" width="0.9" height="0.9"/><rect x="168.8" y="322.69" width="0.9" height="0.9"/><rect x="167.1" y="324.36" width="0.9" height="0.9"/><rect x="168.8" y="326.03" width="0.9" height="0.9"/><rect x="167.1" y="327.70" width="0.9" height="0.9"/><rect x="168.8" y="329.37" width="0.9" height="0.9"/><rect x="167.1" y="331.04" width="0.9" height="0.9"/><rect x="168.8" y="332.71" width="0.9" height="0.9"/><rect x="167.1" y="334.38" width="0.9" height="0.9"/><rect x="168.8" y="336.05" width="0.9" height="0.9"/><rect x="167.1" y="337.72" width="0.9" height="0.9"/><rect x="168.8" y="339.39" width="0.9" height="0.9"/><rect x="167.1" y="341.06" width="0.9" height="0.9"/><rect x="168.8" y="342.73" width="0.9" height="0.9"/><rect x="167.1" y="344.40" width="0.9" height="0.9"/><rect x="168.8" y="346.07" width="0.9" height="0.9"/><rect x="167.1" y="347.74" width="0.9" height="0.9"/><rect x="168.8" y="349.41" width="0.9" height="0.9"/><rect x="167.1" y="351.08" width="0.9" height="0.9"/><rect x="168.8" y="352.75" width="0.9" height="0.9"/><rect x="167.1" y="354.42" width="0.9" height="0.9"/><rect x="168.8" y="356.09" width="0.9" height="0.9"/><rect x="167.1" y="357.76" width="0.9" height="0.9"/><rect x="168.8" y="359.43" width="0.9" height="0.9"/><rect x="167.1" y="361.10" width="0.9" height="0.9"/><rect x="168.8" y="362.77" width="0.9" height="0.9"/><rect x="167.1" y="364.44" width="0.9" height="0.9"/><rect x="168.8" y="366.11" width="0.9" height="0.9"/><rect x="167.1" y="367.78" width="0.9" height="0.9"/><rect x="168.8" y="369.45" width="0.9" height="0.9"/><rect x="167.1" y="371.12" width="0.9" height="0.9"/><rect x="168.8" y="372.79" width="0.9" height="0.9"/><rect x="167.1" y="374.46" width="0.9" height="0.9"/><rect x="168.8" y="376.13" width="0.9" height="0.9"/><rect x="167.1" y="377.80" width="0.9" height="0.9"/><rect x="168.8" y="379.47" width="0.9" height="0.9"/><rect x="167.1" y="381.14" width="0.9" height="0.9"/><rect x="168.8" y="382.81" width="0.9" height="0.9"/><rect x="167.1" y="384.48" width="0.9" height="0.9"/><rect x="168.8" y="386.15" width="0.9" height="0.9"/><rect x="167.1" y="387.82" width="0.9" height="0.9"/><rect x="168.8" y="389.49" width="0.9" height="0.9"/><rect x="167.1" y="391.16" width="0.9" height="0.9"/><rect x="168.8" y="392.83" width="0.9" height="0.9"/><rect x="167.1" y="394.50" width="0.9" height="0.9"/><rect x="168.8" y="396.17" width="0.9" height="0.9"/><rect x="167.1" y="397.84" width="0.9" height="0.9"/><rect x="168.8" y="399.51" width="0.9" height="0.9"/><rect x="167.1" y="401.18" width="0.9" height="0.9"/><rect x="168.8" y="402.85" width="0.9" height="0.9"/><rect x="167.1" y="404.52" width="0.9" height="0.9"/><rect x="168.8" y="406.19" width="0.9" height="0.9"/><rect x="167.1" y="407.86" width="0.9" height="0.9"/><rect x="168.8" y="409.53" width="0.9" height="0.9"/><rect x="167.1" y="411.20" width="0.9" height="0.9"/><rect x="168.8" y="412.87" width="0.9" height="0.9"/><rect x="167.1" y="414.54" width="0.9" height="0.9"/></g></svg>
<div style="left:8px;top:571px;width:116px;height:12px;background:#fff;border-radius:1px;box-shadow:0 0.8px 1.2px rgba(0,0,0,0.3),0 0 0.8px rgba(0,0,0,0.12)"></div>
<div class="t" style="left:9.90px;top:573.60px;font-size:6.5px;color:#686868;transform:scaleX(1.0005);transform-origin:0 0;">Über Namen filtern...</div>
<div style="left:115px;top:572px;width:8px;height:10px;background:#f7f7f7;border:1px solid #e2e2e2"></div>
<svg style="left:116px;top:573.5px" width="7" height="7" viewBox="0 0 7 7"><circle cx="4" cy="2.8" r="1.7" fill="none" stroke="#444" stroke-width="0.7"/><path d="M2.8 4.1L0.9 6.1" stroke="#444" stroke-width="0.9"/></svg>
<div style="left:170px;top:107px;width:881px;height:480px;background:#cce4ff"></div>
<svg style="left:0;top:100px" width="1066" height="10" viewBox="0 100 1066 10"><rect x="170.5" y="106.1" width="889.8" height="1.6" fill="url(#tl)"/></svg>
<div class="t" style="left:176.00px;top:99.40px;font-size:6.4px;color:#1e1e1e;transform:scaleX(0.9632);transform-origin:0 0;">Zuletzt geöffnet</div>
<div style="left:232px;top:95.3px;width:132.6px;height:12.7px;background:#cce4ff;border:1px solid #4d5159;border-bottom:none;border-radius:1.5px 1.5px 0 0"></div>
<div class="t" style="left:243.20px;top:99.30px;font-size:6.3px;color:#1e1e1e;transform:scaleX(0.9557);transform-origin:0 0;">06 Objektbegehung - Fluchtwege bearb.</div>
<div style="left:355.6px;top:98px;width:7px;height:7px;background:#fff;border:0.8px solid #8a8a8a"></div>
<svg style="left:355.6px;top:98px" width="7" height="7" viewBox="0 0 7 7"><path d="M1.9 1.9l3.2 3.2M5.1 1.9l-3.2 3.2" stroke="#111" stroke-width="0.9"/></svg>
<div style="left:215.3px;top:109px;width:834.9px;height:88px;background:#fff"></div>
<div class="t" style="left:349.6px;top:120.6px;font-size:8.9px;font-weight:bold;color:#111">Objektbegehung</div>
<div class="t" style="left:349.6px;top:148.1px;font-size:7.36px;font-weight:bold;color:#111">Checkliste - Fluchtwege</div>
<div class="t" style="left:349.60px;top:174.10px;font-size:6px;color:#111;transform:scaleX(1.0027);transform-origin:0 0;-webkit-text-stroke:0.1px #111;">Musterobjekt, Musterstraße, 12345 Musterstadt</div>
<div class="t" style="left:349.6px;top:190.3px;font-size:6.1px;font-weight:bold;color:#111">Bereich:</div>
<div class="t" style="left:483.6px;top:190.3px;font-size:6.1px;font-weight:bold;color:#111">Prüfer:</div>
<svg style="left:0;top:100px" width="1066" height="100" viewBox="0 100 1066 100"><path d="M347.6 146V197M481.4 189.4V197M215.3 164.4H576M215.3 189.4H572" stroke="#333" stroke-width="0.8" fill="none"/></svg>
<div style="left:215.3px;top:201.4px;width:832.9000000000001px;height:385.6px;background:#fff"></div>
<div style="left:215.3px;top:201.4px;width:832.9000000000001px;height:9.0px;background:#ddd9c3"></div>
<div class="t" style="left:330.00px;top:203.40px;font-size:6.3px;color:#111;transform:translateX(-50%) scaleX(0.9117);">Frage</div>
<div class="t" style="left:535.40px;top:203.40px;font-size:6.3px;color:#111;transform:translateX(-50%) scaleX(1.0206);">Antwort</div>
<div class="t" style="left:740.40px;top:203.40px;font-size:6.3px;color:#111;transform:translateX(-50%) scaleX(0.9438);">Rechtsbezug</div>
<div class="t" style="left:944.60px;top:203.40px;font-size:6.3px;color:#111;transform:translateX(-50%) scaleX(0.9502);">Bemerkung</div>
<div style="left:0;top:0;width:1066px;height:587px;overflow:hidden">
<div class="t" style="left:221.20px;top:222.23px;font-size:6.6px;color:#111;transform:translateX(-50%) scaleX(0.9404);">1</div>
<div class="t" style="left:228.30px;top:217.93px;font-size:6.3px;color:#111;transform:scaleX(0.9893);transform-origin:0 0;-webkit-text-stroke:0.1px #111;">Führen Fluchtwege auf möglichst kurzem Weg ins Freie oder in einen</div>
<div class="t" style="left:228.30px;top:225.43px;font-size:6.3px;color:#111;transform:scaleX(0.9244);transform-origin:0 0;-webkit-text-stroke:0.1px #111;">gesicherten Bereich?</div>
<div class="t" style="left:639.70px;top:222.33px;font-size:6.4px;color:#111;transform:scaleX(0.9291);transform-origin:0 0;-webkit-text-stroke:0.1px #111;">ASR A2.3 Kapitel 4 (1)</div>
<div class="t" style="left:445.60px;top:212.60px;font-size:6.3px;color:#111;transform:scaleX(0.8413);transform-origin:0 0;-webkit-text-stroke:0.1px #111;">Ja</div>
<div class="t" style="left:445.60px;top:222.10px;font-size:6.3px;color:#111;transform:scaleX(0.8724);transform-origin:0 0;-webkit-text-stroke:0.1px #111;">Nein</div>
<div class="t" style="left:445.60px;top:231.60px;font-size:6.3px;color:#111;transform:scaleX(0.9799);transform-origin:0 0;-webkit-text-stroke:0.1px #111;">nicht relevant</div>
<div class="t" style="left:221.20px;top:250.58px;font-size:6.6px;color:#111;transform:translateX(-50%) scaleX(0.9404);">2</div>
<div class="t" style="left:228.30px;top:246.28px;font-size:6.3px;color:#111;transform:scaleX(0.955);transform-origin:0 0;-webkit-text-stroke:0.1px #111;">Werden Fluchtwege, Notausgänge und Notausstiege ständig in den</div>
<div class="t" style="left:228.30px;top:253.78px;font-size:6.3px;color:#111;transform:scaleX(0.9327);transform-origin:0 0;-webkit-text-stroke:0.1px #111;">erforderlichen Abmessungen frei gehalten?</div>
<div class="t" style="left:639.70px;top:250.68px;font-size:6.4px;color:#111;transform:scaleX(0.9291);transform-origin:0 0;-webkit-text-stroke:0.1px #111;">ASR A2.3 Kapitel 4 (3)</div>
<div class="t" style="left:445.60px;top:240.95px;font-size:6.3px;color:#111;transform:scaleX(0.8413);transform-origin:0 0;-webkit-text-stroke:0.1px #111;">Ja</div>
<div class="t" style="left:445.60px;top:250.45px;font-size:6.3px;color:#111;transform:scaleX(0.8724);transform-origin:0 0;-webkit-text-stroke:0.1px #111;">Nein</div>
<div class="t" style="left:445.60px;top:259.95px;font-size:6.3px;color:#111;transform:scaleX(0.9799);transform-origin:0 0;-webkit-text-stroke:0.1px #111;">nicht relevant</div>
<div class="t" style="left:221.20px;top:278.93px;font-size:6.6px;color:#111;transform:translateX(-50%) scaleX(0.9404);">3</div>
<div class="t" style="left:228.30px;top:274.62px;font-size:6.3px;color:#111;transform:scaleX(0.9477);transform-origin:0 0;-webkit-text-stroke:0.1px #111;">Sind eventuell auf dem Fluchtweg vorhandene Höhenunterschiede mit einer</div>
<div class="t" style="left:228.30px;top:282.12px;font-size:6.3px;color:#111;transform:scaleX(0.9322);transform-origin:0 0;-webkit-text-stroke:0.1px #111;">maximalen Neigung von 6 % über eine Schrägrampe ausgeglichen?</div>
<div class="t" style="left:639.70px;top:279.02px;font-size:6.4px;color:#111;transform:scaleX(0.9291);transform-origin:0 0;-webkit-text-stroke:0.1px #111;">ASR A2.3 Kapitel 4 (5)</div>
<div class="t" style="left:445.60px;top:269.30px;font-size:6.3px;color:#111;transform:scaleX(0.8413);transform-origin:0 0;-webkit-text-stroke:0.1px #111;">Ja</div>
<div class="t" style="left:445.60px;top:278.80px;font-size:6.3px;color:#111;transform:scaleX(0.8724);transform-origin:0 0;-webkit-text-stroke:0.1px #111;">Nein</div>
<div class="t" style="left:445.60px;top:288.30px;font-size:6.3px;color:#111;transform:scaleX(0.9799);transform-origin:0 0;-webkit-text-stroke:0.1px #111;">nicht relevant</div>
<div class="t" style="left:221.20px;top:307.28px;font-size:6.6px;color:#111;transform:translateX(-50%) scaleX(0.9404);">4</div>
<div class="t" style="left:228.30px;top:306.98px;font-size:6.3px;color:#111;transform:scaleX(0.9451);transform-origin:0 0;-webkit-text-stroke:0.1px #111;">Werden Durchgangssperren vermieden?</div>
<div class="t" style="left:639.70px;top:307.38px;font-size:6.4px;color:#111;transform:scaleX(0.9291);transform-origin:0 0;-webkit-text-stroke:0.1px #111;">ASR A2.3 Kapitel 4 (7)</div>
<div class="t" style="left:445.60px;top:297.65px;font-size:6.3px;color:#111;transform:scaleX(0.8413);transform-origin:0 0;-webkit-text-stroke:0.1px #111;">Ja</div>
<div class="t" style="left:445.60px;top:307.15px;font-size:6.3px;color:#111;transform:scaleX(0.8724);transform-origin:0 0;-webkit-text-stroke:0.1px #111;">Nein</div>
<div class="t" style="left:445.60px;top:316.65px;font-size:6.3px;color:#111;transform:scaleX(0.9799);transform-origin:0 0;-webkit-text-stroke:0.1px #111;">nicht relevant</div>
<div class="t" style="left:221.20px;top:335.62px;font-size:6.6px;color:#111;transform:translateX(-50%) scaleX(0.9404);">5</div>
<div class="t" style="left:228.30px;top:331.32px;font-size:6.3px;color:#111;transform:scaleX(0.9603);transform-origin:0 0;-webkit-text-stroke:0.1px #111;">Ist sichergestellt, dass Fluchtwege mit der vorgeschriebenen</div>
<div class="t" style="left:228.30px;top:338.82px;font-size:6.3px;color:#111;transform:scaleX(0.9567);transform-origin:0 0;-webkit-text-stroke:0.1px #111;">Mindestbeleuchtungsstärke von 1 Lux beleuchtet werden?</div>
<div class="t" style="left:639.70px;top:335.72px;font-size:6.4px;color:#111;transform:scaleX(0.9291);transform-origin:0 0;-webkit-text-stroke:0.1px #111;">ASR A2.3 Kapitel 4 (8)</div>
<div class="t" style="left:445.60px;top:326.00px;font-size:6.3px;color:#111;transform:scaleX(0.8413);transform-origin:0 0;-webkit-text-stroke:0.1px #111;">Ja</div>
<div class="t" style="left:445.60px;top:335.50px;font-size:6.3px;color:#111;transform:scaleX(0.8724);transform-origin:0 0;-webkit-text-stroke:0.1px #111;">Nein</div>
<div class="t" style="left:445.60px;top:345.00px;font-size:6.3px;color:#111;transform:scaleX(0.9799);transform-origin:0 0;-webkit-text-stroke:0.1px #111;">nicht relevant</div>
<div class="t" style="left:221.20px;top:363.98px;font-size:6.6px;color:#111;transform:translateX(-50%) scaleX(0.9404);">6</div>
<div class="t" style="left:228.30px;top:359.68px;font-size:6.3px;color:#111;transform:scaleX(0.9374);transform-origin:0 0;-webkit-text-stroke:0.1px #111;">Befindet/n sich die Sammelstelle/n außerhalb des Wirkbereiches einer</div>
<div class="t" style="left:228.30px;top:367.18px;font-size:6.3px;color:#111;transform:scaleX(0.9523);transform-origin:0 0;-webkit-text-stroke:0.1px #111;">gefahrbringenden Gefährdung?</div>
<div class="t" style="left:639.70px;top:364.07px;font-size:6.4px;color:#111;transform:scaleX(0.9292);transform-origin:0 0;-webkit-text-stroke:0.1px #111;">ASR A2.3 Kapitel 4 (10)</div>
<div class="t" style="left:445.60px;top:354.35px;font-size:6.3px;color:#111;transform:scaleX(0.8413);transform-origin:0 0;-webkit-text-stroke:0.1px #111;">Ja</div>
<div class="t" style="left:445.60px;top:363.85px;font-size:6.3px;color:#111;transform:scaleX(0.8724);transform-origin:0 0;-webkit-text-stroke:0.1px #111;">Nein</div>
<div class="t" style="left:445.60px;top:373.35px;font-size:6.3px;color:#111;transform:scaleX(0.9799);transform-origin:0 0;-webkit-text-stroke:0.1px #111;">nicht relevant</div>
<div class="t" style="left:221.20px;top:392.33px;font-size:6.6px;color:#111;transform:translateX(-50%) scaleX(0.9404);">7</div>
<div class="t" style="left:228.30px;top:388.03px;font-size:6.3px;color:#111;transform:scaleX(0.9479);transform-origin:0 0;-webkit-text-stroke:0.1px #111;">Entsprechen die Hauptfluchtwege den baurechtlichen Vorgaben? (z. B.</div>
<div class="t" style="left:228.30px;top:395.53px;font-size:6.3px;color:#111;transform:scaleX(0.9628);transform-origin:0 0;-webkit-text-stroke:0.1px #111;">Breite, Höhe, Verlauf, Länge)</div>
<div class="t" style="left:639.70px;top:392.43px;font-size:6.4px;color:#111;transform:scaleX(0.9293);transform-origin:0 0;-webkit-text-stroke:0.1px #111;">ASR A2.3 Kapitel 5</div>
<div class="t" style="left:445.60px;top:382.70px;font-size:6.3px;color:#111;transform:scaleX(0.8413);transform-origin:0 0;-webkit-text-stroke:0.1px #111;">Ja</div>
<div class="t" style="left:445.60px;top:392.20px;font-size:6.3px;color:#111;transform:scaleX(0.8724);transform-origin:0 0;-webkit-text-stroke:0.1px #111;">Nein</div>
<div class="t" style="left:445.60px;top:401.70px;font-size:6.3px;color:#111;transform:scaleX(0.9799);transform-origin:0 0;-webkit-text-stroke:0.1px #111;">nicht relevant</div>
<div class="t" style="left:221.20px;top:420.68px;font-size:6.6px;color:#111;transform:translateX(-50%) scaleX(0.9404);">8</div>
<div class="t" style="left:228.30px;top:416.38px;font-size:6.3px;color:#111;transform:scaleX(0.9562);transform-origin:0 0;-webkit-text-stroke:0.1px #111;">Entsprechen die eventuell erforderlichen Nebenfluchtwege den</div>
<div class="t" style="left:228.30px;top:423.88px;font-size:6.3px;color:#111;transform:scaleX(0.9597);transform-origin:0 0;-webkit-text-stroke:0.1px #111;">baurechtlichen Anforderungen?</div>
<div class="t" style="left:639.70px;top:420.78px;font-size:6.4px;color:#111;transform:scaleX(0.9293);transform-origin:0 0;-webkit-text-stroke:0.1px #111;">ASR A2.3 Kapitel 6</div>
<div class="t" style="left:445.60px;top:411.05px;font-size:6.3px;color:#111;transform:scaleX(0.8413);transform-origin:0 0;-webkit-text-stroke:0.1px #111;">Ja</div>
<div class="t" style="left:445.60px;top:420.55px;font-size:6.3px;color:#111;transform:scaleX(0.8724);transform-origin:0 0;-webkit-text-stroke:0.1px #111;">Nein</div>
<div class="t" style="left:445.60px;top:430.05px;font-size:6.3px;color:#111;transform:scaleX(0.9799);transform-origin:0 0;-webkit-text-stroke:0.1px #111;">nicht relevant</div>
<div class="t" style="left:221.20px;top:449.03px;font-size:6.6px;color:#111;transform:translateX(-50%) scaleX(0.9404);">9</div>
<div class="t" style="left:228.30px;top:444.73px;font-size:6.3px;color:#111;transform:scaleX(0.9456);transform-origin:0 0;-webkit-text-stroke:0.1px #111;">Lassen sich die Notausgangstüren von innen ohne fremde Hilfsmittel</div>
<div class="t" style="left:228.30px;top:452.23px;font-size:6.3px;color:#111;transform:scaleX(0.9503);transform-origin:0 0;-webkit-text-stroke:0.1px #111;">jederzeit leicht öffnen, solange sich Personen im Gebäude aufhalten?</div>
<div class="t" style="left:639.70px;top:449.12px;font-size:6.4px;color:#111;transform:scaleX(0.9291);transform-origin:0 0;-webkit-text-stroke:0.1px #111;">ASR A2.3 Kapitel 7 (1)</div>
<div class="t" style="left:445.60px;top:439.40px;font-size:6.3px;color:#111;transform:scaleX(0.8413);transform-origin:0 0;-webkit-text-stroke:0.1px #111;">Ja</div>
<div class="t" style="left:445.60px;top:448.90px;font-size:6.3px;color:#111;transform:scaleX(0.8724);transform-origin:0 0;-webkit-text-stroke:0.1px #111;">Nein</div>
<div class="t" style="left:445.60px;top:458.40px;font-size:6.3px;color:#111;transform:scaleX(0.9799);transform-origin:0 0;-webkit-text-stroke:0.1px #111;">nicht relevant</div>
<div class="t" style="left:221.20px;top:477.38px;font-size:6.6px;color:#111;transform:translateX(-50%) scaleX(0.9383);">10</div>
<div class="t" style="left:228.30px;top:473.07px;font-size:6.3px;color:#111;transform:scaleX(0.9457);transform-origin:0 0;-webkit-text-stroke:0.1px #111;">Lassen sich verschlossene Notausgangstüren durch betätigen eines</div>
<div class="t" style="left:228.30px;top:480.57px;font-size:6.3px;color:#111;transform:scaleX(0.941);transform-origin:0 0;-webkit-text-stroke:0.1px #111;">Türdrückers (z. B. Panikschloss) öffnen?</div>
<div class="t" style="left:639.70px;top:477.47px;font-size:6.4px;color:#111;transform:scaleX(0.9291);transform-origin:0 0;-webkit-text-stroke:0.1px #111;">ASR A2.3 Kapitel 7 (2)</div>
<div class="t" style="left:445.60px;top:467.75px;font-size:6.3px;color:#111;transform:scaleX(0.8413);transform-origin:0 0;-webkit-text-stroke:0.1px #111;">Ja</div>
<div class="t" style="left:445.60px;top:477.25px;font-size:6.3px;color:#111;transform:scaleX(0.8724);transform-origin:0 0;-webkit-text-stroke:0.1px #111;">Nein</div>
<div class="t" style="left:445.60px;top:486.75px;font-size:6.3px;color:#111;transform:scaleX(0.9799);transform-origin:0 0;-webkit-text-stroke:0.1px #111;">nicht relevant</div>
<div class="t" style="left:221.20px;top:505.73px;font-size:6.6px;color:#111;transform:translateX(-50%) scaleX(0.9385);">11</div>
<div class="t" style="left:228.30px;top:505.43px;font-size:6.3px;color:#111;transform:scaleX(0.949);transform-origin:0 0;-webkit-text-stroke:0.1px #111;">Schlagen manuell betätigte Notausgangstüren in Fluchtrichtung auf?</div>
<div class="t" style="left:639.70px;top:505.82px;font-size:6.4px;color:#111;transform:scaleX(0.9291);transform-origin:0 0;-webkit-text-stroke:0.1px #111;">ASR A2.3 Kapitel 7 (5)</div>
<div class="t" style="left:445.60px;top:496.10px;font-size:6.3px;color:#111;transform:scaleX(0.8413);transform-origin:0 0;-webkit-text-stroke:0.1px #111;">Ja</div>
<div class="t" style="left:445.60px;top:505.60px;font-size:6.3px;color:#111;transform:scaleX(0.8724);transform-origin:0 0;-webkit-text-stroke:0.1px #111;">Nein</div>
<div class="t" style="left:445.60px;top:515.10px;font-size:6.3px;color:#111;transform:scaleX(0.9799);transform-origin:0 0;-webkit-text-stroke:0.1px #111;">nicht relevant</div>
<div class="t" style="left:221.20px;top:534.07px;font-size:6.6px;color:#111;transform:translateX(-50%) scaleX(0.9383);">12</div>
<div class="t" style="left:228.30px;top:529.77px;font-size:6.3px;color:#111;transform:scaleX(0.9508);transform-origin:0 0;-webkit-text-stroke:0.1px #111;">Sind Fluchtwege, Notausgänge, Notausstiege im Verlauf von Fluchtwegen</div>
<div class="t" style="left:228.30px;top:537.27px;font-size:6.3px;color:#111;transform:scaleX(0.9476);transform-origin:0 0;-webkit-text-stroke:0.1px #111;">dauerhaft gekennzeichnet?</div>
<div class="t" style="left:639.70px;top:534.17px;font-size:6.4px;color:#111;transform:scaleX(0.929);transform-origin:0 0;-webkit-text-stroke:0.1px #111;">ASR A2.3 Kapitel 8.1 (1)</div>
<div class="t" style="left:445.60px;top:524.45px;font-size:6.3px;color:#111;transform:scaleX(0.8413);transform-origin:0 0;-webkit-text-stroke:0.1px #111;">Ja</div>
<div class="t" style="left:445.60px;top:533.95px;font-size:6.3px;color:#111;transform:scaleX(0.8724);transform-origin:0 0;-webkit-text-stroke:0.1px #111;">Nein</div>
<div class="t" style="left:445.60px;top:543.45px;font-size:6.3px;color:#111;transform:scaleX(0.9799);transform-origin:0 0;-webkit-text-stroke:0.1px #111;">nicht relevant</div>
<div class="t" style="left:221.20px;top:562.42px;font-size:6.6px;color:#111;transform:translateX(-50%) scaleX(0.9383);">13</div>
<div class="t" style="left:228.30px;top:558.12px;font-size:6.3px;color:#111;transform:scaleX(0.9398);transform-origin:0 0;-webkit-text-stroke:0.1px #111;">Sind die Fluchtwegkennzeichnungen so angebracht, dass sie auch noch von</div>
<div class="t" style="left:228.30px;top:565.62px;font-size:6.3px;color:#111;transform:scaleX(0.9573);transform-origin:0 0;-webkit-text-stroke:0.1px #111;">der am weitesten entfernten Stelle zu erkennen sind? (Art und Größe)</div>
<div class="t" style="left:639.70px;top:562.52px;font-size:6.4px;color:#111;transform:scaleX(0.929);transform-origin:0 0;-webkit-text-stroke:0.1px #111;">ASR A2.3 Kapitel 8.2 (3)</div>
<div class="t" style="left:445.60px;top:552.80px;font-size:6.3px;color:#111;transform:scaleX(0.8413);transform-origin:0 0;-webkit-text-stroke:0.1px #111;">Ja</div>
<div class="t" style="left:445.60px;top:562.30px;font-size:6.3px;color:#111;transform:scaleX(0.8724);transform-origin:0 0;-webkit-text-stroke:0.1px #111;">Nein</div>
<div class="t" style="left:445.60px;top:571.80px;font-size:6.3px;color:#111;transform:scaleX(0.9799);transform-origin:0 0;-webkit-text-stroke:0.1px #111;">nicht relevant</div>
<div class="t" style="left:445.60px;top:581.15px;font-size:6.3px;color:#111;transform:scaleX(0.8413);transform-origin:0 0;-webkit-text-stroke:0.1px #111;">Ja</div>
<div class="t" style="left:445.60px;top:590.65px;font-size:6.3px;color:#111;transform:scaleX(0.8724);transform-origin:0 0;-webkit-text-stroke:0.1px #111;">Nein</div>
<div class="t" style="left:445.60px;top:600.15px;font-size:6.3px;color:#111;transform:scaleX(0.9799);transform-origin:0 0;-webkit-text-stroke:0.1px #111;">nicht relevant</div>
</div>
<svg style="left:0;top:0" width="1066" height="587" viewBox="0 0 1066 587"><path d="M215.3 201.4V587M227.3 201.4V587M433.4 201.4V587M638.4 201.4V587M843.8 201.4V587M1048.2 201.4V587M215.3 201.4H1048.2M215.3 210.40H1048.2M215.3 239.10H1048.2M215.3 267.45H1048.2M215.3 295.80H1048.2M215.3 324.15H1048.2M215.3 352.50H1048.2M215.3 380.85H1048.2M215.3 409.20H1048.2M215.3 437.55H1048.2M215.3 465.90H1048.2M215.3 494.25H1048.2M215.3 522.60H1048.2M215.3 550.95H1048.2M215.3 579.30H1048.2" stroke="#333" stroke-width="0.85" fill="none"/><g fill="#f6f6f6" stroke="#cbcbcb" stroke-width="0.7"><rect x="437.6" y="212.70" width="5.5" height="5.5" rx="1.2"/><rect x="437.6" y="222.20" width="5.5" height="5.5" rx="1.2"/><rect x="437.6" y="231.70" width="5.5" height="5.5" rx="1.2"/><rect x="437.6" y="241.05" width="5.5" height="5.5" rx="1.2"/><rect x="437.6" y="250.55" width="5.5" height="5.5" rx="1.2"/><rect x="437.6" y="260.05" width="5.5" height="5.5" rx="1.2"/><rect x="437.6" y="269.40" width="5.5" height="5.5" rx="1.2"/><rect x="437.6" y="278.90" width="5.5" height="5.5" rx="1.2"/><rect x="437.6" y="288.40" width="5.5" height="5.5" rx="1.2"/><rect x="437.6" y="297.75" width="5.5" height="5.5" rx="1.2"/><rect x="437.6" y="307.25" width="5.5" height="5.5" rx="1.2"/><rect x="437.6" y="316.75" width="5.5" height="5.5" rx="1.2"/><rect x="437.6" y="326.10" width="5.5" height="5.5" rx="1.2"/><rect x="437.6" y="335.60" width="5.5" height="5.5" rx="1.2"/><rect x="437.6" y="345.10" width="5.5" height="5.5" rx="1.2"/><rect x="437.6" y="354.45" width="5.5" height="5.5" rx="1.2"/><rect x="437.6" y="363.95" width="5.5" height="5.5" rx="1.2"/><rect x="437.6" y="373.45" width="5.5" height="5.5" rx="1.2"/><rect x="437.6" y="382.80" width="5.5" height="5.5" rx="1.2"/><rect x="437.6" y="392.30" width="5.5" height="5.5" rx="1.2"/><rect x="437.6" y="401.80" width="5.5" height="5.5" rx="1.2"/><rect x="437.6" y="411.15" width="5.5" height="5.5" rx="1.2"/><rect x="437.6" y="420.65" width="5.5" height="5.5" rx="1.2"/><rect x="437.6" y="430.15" width="5.5" height="5.5" rx="1.2"/><rect x="437.6" y="439.50" width="5.5" height="5.5" rx="1.2"/><rect x="437.6" y="449.00" width="5.5" height="5.5" rx="1.2"/><rect x="437.6" y="458.50" width="5.5" height="5.5" rx="1.2"/><rect x="437.6" y="467.85" width="5.5" height="5.5" rx="1.2"/><rect x="437.6" y="477.35" width="5.5" height="5.5" rx="1.2"/><rect x="437.6" y="486.85" width="5.5" height="5.5" rx="1.2"/><rect x="437.6" y="496.20" width="5.5" height="5.5" rx="1.2"/><rect x="437.6" y="505.70" width="5.5" height="5.5" rx="1.2"/><rect x="437.6" y="515.20" width="5.5" height="5.5" rx="1.2"/><rect x="437.6" y="524.55" width="5.5" height="5.5" rx="1.2"/><rect x="437.6" y="534.05" width="5.5" height="5.5" rx="1.2"/><rect x="437.6" y="543.55" width="5.5" height="5.5" rx="1.2"/><rect x="437.6" y="552.90" width="5.5" height="5.5" rx="1.2"/><rect x="437.6" y="562.40" width="5.5" height="5.5" rx="1.2"/><rect x="437.6" y="571.90" width="5.5" height="5.5" rx="1.2"/><rect x="437.6" y="581.25" width="5.5" height="5.5" rx="1.2"/><rect x="437.6" y="590.75" width="5.5" height="5.5" rx="1.2"/><rect x="437.6" y="600.25" width="5.5" height="5.5" rx="1.2"/></g></svg>
<div style="left:1051px;top:108.6px;width:9.2px;height:478.4px;background:#f0f0f0"></div>
<div style="left:1055.3px;top:118px;width:1.6px;height:259px;background:#a3a3a3"></div>
<div style="left:212px;top:77px;width:119px;height:152.3px;background:#fff;border:1px solid #c8c6c4;box-shadow:0.5px 1.5px 3px rgba(0,0,0,0.25)"></div>
<div style="left:213px;top:147px;width:117px;height:12.8px;background:#eaeaea"></div>
<div class="t" style="left:231.70px;top:81.30px;font-size:6.67px;color:#505050;transform:scaleX(0.9967);transform-origin:0 0;">Zeile hinzufügen</div>
<div class="t" style="left:231.70px;top:94.90px;font-size:6.67px;color:#505050;transform:scaleX(0.9971);transform-origin:0 0;">Rubrik hinzufügen</div>
<div class="t" style="left:231.70px;top:108.20px;font-size:6.67px;color:#505050;transform:scaleX(1.0132);transform-origin:0 0;">Auswertung hinzufügen</div>
<div class="t" style="left:231.70px;top:122.30px;font-size:6.67px;color:#505050;transform:scaleX(1.0069);transform-origin:0 0;">Textblock hinzufügen</div>
<div class="t" style="left:231.70px;top:136.80px;font-size:6.67px;color:#b9b7b5;transform:scaleX(1.0012);transform-origin:0 0;">Seitenumbruch hinzufügen</div>
<div class="t" style="left:231.70px;top:163.70px;font-size:6.67px;color:#505050;transform:scaleX(1.0007);transform-origin:0 0;">Tabellenkopf</div>
<div class="t" style="left:231.70px;top:178.10px;font-size:6.67px;color:#b9b7b5;transform:scaleX(0.9558);transform-origin:0 0;">Eingangstext</div>
<div class="t" style="left:231.70px;top:191.10px;font-size:6.67px;color:#b9b7b5;transform:scaleX(0.9926);transform-origin:0 0;">Abschlußtext</div>
<div class="t" style="left:231.70px;top:205.90px;font-size:6.67px;color:#505050;transform:scaleX(0.9819);transform-origin:0 0;">Seitenkopf</div>
<div class="t" style="left:231.70px;top:218.90px;font-size:6.67px;color:#505050;transform:scaleX(0.9649);transform-origin:0 0;">Seitenfuß</div>
<div class="t" style="left:216.70px;top:150.30px;font-size:6.7px;color:#444;font-weight:bold;transform:scaleX(1.0112);transform-origin:0 0;">Kopf- &amp; Fußelemente</div>
<div class="msep" style="top:118.2px"></div>
<div class="msep" style="top:131.8px"></div>
<div class="msep" style="top:173.2px"></div>
<div class="msep" style="top:200.7px"></div>
<svg style="left:213px;top:78px" width="16" height="150" viewBox="213 78 16 150">
<!-- Zeile -->
<g>
<rect x="217.3" y="80.4" width="5.6" height="7.6" rx="0.6" fill="#a9c9ee" stroke="#4a82c6" stroke-width="0.6"/>
<rect x="218.1" y="81" width="4" height="1.5" fill="#1f4e96"/>
<path d="M218.2 83.6h3.8M218.2 85h3.8" stroke="#2a5ea8" stroke-width="0.6"/>
<path d="M221.4 85.9l2.7 1.4-2.7 1.4z" fill="#35c148"/>
</g>
<!-- Rubrik -->
<g>
<rect x="217.3" y="94" width="5.6" height="7.6" rx="0.6" fill="#8fb6e6" stroke="#4a82c6" stroke-width="0.6"/>
<rect x="217.6" y="94.2" width="5" height="1.4" fill="#1f4e96"/>
<rect x="218.1" y="96.4" width="4" height="3.8" fill="#6f9fd8"/>
<path d="M221.4 99.5l2.7 1.4-2.7 1.4z" fill="#35c148"/>
</g>
<!-- Auswertung -->
<g fill="none" stroke="#2f6fbe" stroke-width="0.8" stroke-linecap="round">
<path d="M222.6 108.6a3.5 3.5 0 1 0 0.6 4.6"/>
<path d="M219.9 111.2l-1.2-1.6" stroke-width="0.6"/>
</g>
<!-- Textblock -->
<g>
<rect x="217.3" y="121.4" width="5.6" height="7.6" rx="0.6" fill="#9cc0ea" stroke="#4a82c6" stroke-width="0.6"/>
<rect x="217.8" y="121.8" width="4.6" height="1.7" fill="#1f4e96"/>
<path d="M221.4 126.9l2.7 1.4-2.7 1.4z" fill="#35c148"/>
</g>
<!-- Seitenumbruch (disabled) -->
<g fill="none" stroke="#d9d9d9" stroke-width="0.7">
<path d="M217.6 135.6v2.5h5.4v-2.5M217.6 143.9v-2.5h5.4v2.5"/>
<path d="M216.5 139.8h7.6" stroke-width="0.5"/>
</g>
<!-- Tabellenkopf -->
<g>
<rect x="216.2" y="162.3" width="8.6" height="2.3" fill="#1f5fb0"/>
<path d="M216.2 166.3h8.6M216.2 168.3h8.6M216.2 170.2h8.6" stroke="#2d67b3" stroke-width="0.7"/>
<path d="M219 162.3v8.4M222 162.3v8.4" stroke="#5e8bc8" stroke-width="0.6"/>
</g>
<!-- Eingangstext (disabled) -->
<g fill="none" stroke="#dedede" stroke-width="0.7">
<path d="M217.6 177.3h3.4l1.9 1.9v5.6h-5.3z"/><path d="M218.7 181h3M218.7 182.8h3" stroke-width="0.5"/>
</g>
<!-- Abschlusstext (disabled) -->
<g fill="none" stroke="#dedede" stroke-width="0.7">
<path d="M217.6 190.3h3.4l1.9 1.9v5.6h-5.3z"/><path d="M218.7 194h3M218.7 195.8h3" stroke-width="0.5"/>
</g>
<!-- Seitenkopf -->
<g>
<path d="M217.7 205.5h3.6l1.8 1.8v5.2h-5.4z" fill="#fff" stroke="#2b68b8" stroke-width="0.8"/>
<path d="M217.7 206.1h3.8" stroke="#1f4e96" stroke-width="1.3"/>
</g>
<!-- Seitenfuss -->
<g>
<path d="M217.7 218.5h3.6l1.8 1.8v5.2h-5.4z" fill="#fff" stroke="#2b68b8" stroke-width="0.8"/>
<path d="M217.7 225h5.4" stroke="#1a86d8" stroke-width="1.3"/>
</g>
</svg>

<div style="left:0;top:587px;width:1066px;height:13px;background:#f0f0f0"></div>
<div style="left:0;top:599px;width:1066px;height:1px;background:#4d4d4d"></div>
<div class="t" style="left:4.00px;top:590.40px;font-size:6.3px;color:#333;transform:scaleX(0.9194);transform-origin:0 0;">Einzelplatz</div>
<div class="t" style="left:1006.50px;top:590.40px;font-size:6.3px;color:#333;transform:scaleX(0.9387);transform-origin:0 0;">EP 2026.1</div>
</body></html>
